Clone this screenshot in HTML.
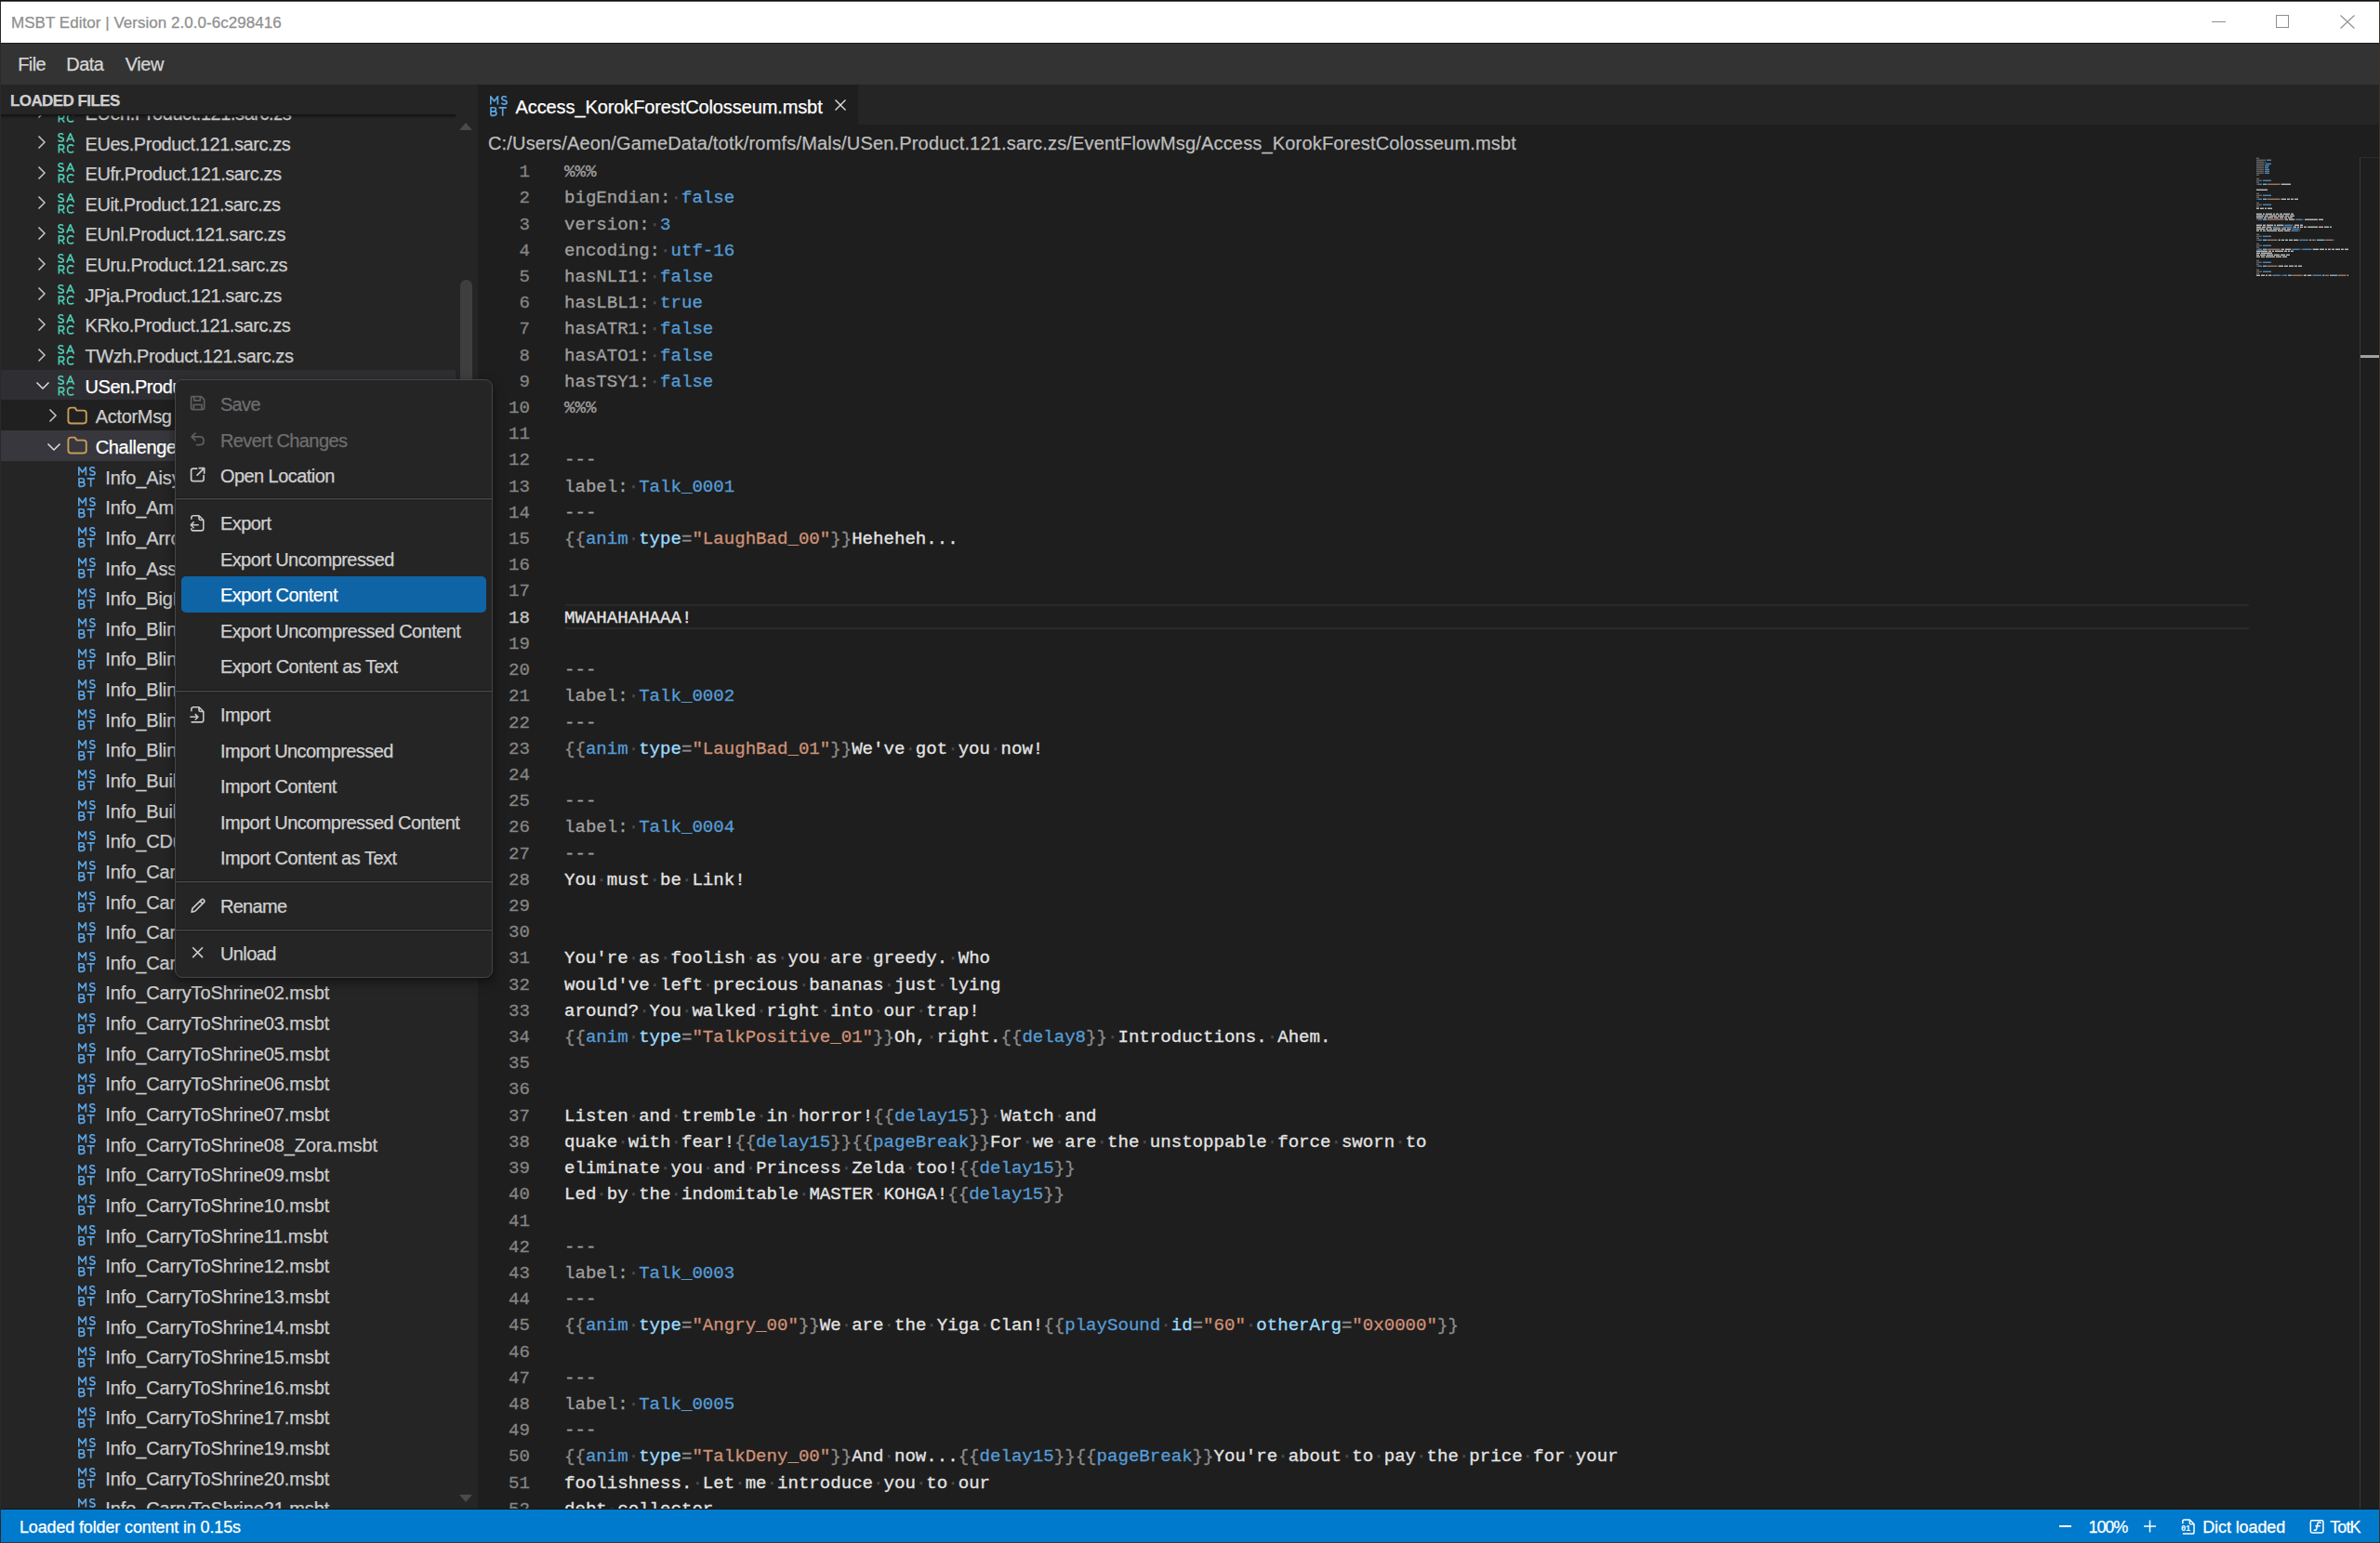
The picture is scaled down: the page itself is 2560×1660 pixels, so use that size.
<!DOCTYPE html>
<html><head><meta charset="utf-8"><title>MSBT Editor</title>
<style>
html,body{margin:0;padding:0;width:2560px;height:1660px;overflow:hidden;background:#1e1e1e;}
body{position:relative;font-family:"Liberation Sans", sans-serif;}
.t{position:absolute;white-space:pre;-webkit-text-stroke:0.25px currentColor;}
.code{position:absolute;white-space:pre;-webkit-text-stroke:0.3px currentColor;font-family:"Liberation Mono", monospace;font-size:19.08px;line-height:28px;}
.ln{position:absolute;white-space:pre;-webkit-text-stroke:0.3px currentColor;font-family:"Liberation Mono", monospace;font-size:19.08px;line-height:28px;color:#858585;text-align:right;width:60px;}
.ws{color:#4a4a4a;}
.k{color:#a0a0a0;} .v{color:#569cd6;} .b{color:#8c8c8c;} .tg{color:#569cd6;} .at{color:#9cdcfe;} .st{color:#ce9178;} .tx{color:#e4e4e4;}
</style></head><body>
<div style="position:absolute;left:0.00px;top:0.00px;width:2560.00px;height:1660.00px;background:#2a2a2a;"></div><div style="position:absolute;left:0.00px;top:0.00px;width:2560.00px;height:1.00px;background:#0e0e0e;"></div><div style="position:absolute;left:2559.00px;top:0.00px;width:1.00px;height:1660.00px;background:#3a342e;"></div><div style="position:absolute;left:0.00px;top:1659.00px;width:2560.00px;height:1.00px;background:#3a342e;"></div><div style="position:absolute;left:1.00px;top:1.00px;width:2558.00px;height:1.00px;background:#5a5a5a;"></div><div style="position:absolute;left:1.00px;top:2.00px;width:2558.00px;height:44.00px;background:#ffffff;"></div><div class="t" style="left:12.00px;top:16.21px;font-size:17.00px;line-height:17.00px;color:#8f8f8f;font-weight:400;letter-spacing:0.035px;">MSBT Editor | Version 2.0.0-6c298416</div><div style="position:absolute;left:2379.00px;top:22.50px;width:15.00px;height:1.00px;background:#8f8f8f;"></div><div style="position:absolute;left:2447.50px;top:16.00px;width:14.00px;height:14.00px;background:transparent;border:1px solid #8f8f8f;box-sizing:border-box;"></div><svg style="position:absolute;left:2517.00px;top:16.00px;" width="16" height="15" viewBox="0 0 16 15"><path d="M0.5 0.5 L15.5 14.5 M15.5 0.5 L0.5 14.5" stroke="#8f8f8f" stroke-width="1.1" fill="none"/></svg><div style="position:absolute;left:1.00px;top:46.00px;width:2558.00px;height:1.00px;background:#1c1c1c;"></div><div style="position:absolute;left:1.00px;top:47.00px;width:2558.00px;height:44.00px;background:#333333;"></div><div class="t" style="left:19.20px;top:59.27px;font-size:20.00px;line-height:20.00px;color:#d6d6d6;font-weight:400;letter-spacing:-0.557px;">File</div><div class="t" style="left:71.30px;top:59.27px;font-size:20.00px;line-height:20.00px;color:#d6d6d6;font-weight:400;letter-spacing:-0.562px;">Data</div><div class="t" style="left:134.80px;top:59.27px;font-size:20.00px;line-height:20.00px;color:#d6d6d6;font-weight:400;letter-spacing:-0.437px;">View</div><div style="position:absolute;left:514.00px;top:91.00px;width:2045.00px;height:1532.00px;background:#1e1e1e;"></div><div style="position:absolute;left:514.00px;top:91.00px;width:2045.00px;height:43.00px;background:#252526;"></div><div style="position:absolute;left:514.00px;top:91.00px;width:409.00px;height:43.00px;background:#1e1e1e;"></div><svg style="position:absolute;left:527.00px;top:103.00px;" width="20" height="23" viewBox="0 0 20 23"><path d="M0.8 9.4 V0.8 L4.6 5.9 L8.4 0.8 V9.4 M17.8 1.9 Q16.9 0.7 15.3 0.7 Q12.8 0.7 12.8 2.8 Q12.8 4.4 15.3 4.9 Q18.1 5.4 18.1 7.2 Q18.1 9.1 15.3 9.1 Q13.2 9.1 12.5 7.7 M1 21.3 V12.7 H4 Q6.4 12.7 6.4 14.8 Q6.4 16.9 4 16.9 H1 M4 16.9 Q7 16.9 7 19.1 Q7 21.3 4 21.3 H1 M9.6 12.9 H17.8 M13.7 12.9 V21.8" stroke="#5aa5e6" stroke-width="1.65" fill="none" stroke-linejoin="round"/></svg><div class="t" style="left:554.60px;top:104.87px;font-size:20.00px;line-height:20.00px;color:#ffffff;font-weight:400;letter-spacing:-0.108px;">Access_KorokForestColosseum.msbt</div><svg style="position:absolute;left:898.00px;top:107.00px;" width="12" height="12" viewBox="0 0 12 12"><path d="M0.5 0.5 L11.5 11.5 M11.5 0.5 L0.5 11.5" stroke="#e6e6e6" stroke-width="1.3" fill="none"/></svg><div class="t" style="left:525.00px;top:144.47px;font-size:20.00px;line-height:20.00px;color:#bdbdbd;font-weight:400;letter-spacing:0.174px;">C:/Users/Aeon/GameData/totk/romfs/Mals/USen.Product.121.sarc.zs/EventFlowMsg/Access_KorokForestColosseum.msbt</div><div style="position:absolute;left:608px;top:650px;width:1811px;height:27px;border-top:2px solid #2a2a2a;border-bottom:2px solid #2a2a2a;box-sizing:border-box;"></div><div class="ln" style="left:510px;top:171.12px;color:#858585">1</div><div class="code" style="left:607px;top:171.12px"><span class="k">%%%</span></div><div class="ln" style="left:510px;top:199.33px;color:#858585">2</div><div class="code" style="left:607px;top:199.33px"><span class="k">bigEndian:</span><span class="ws">·</span><span class="v">false</span></div><div class="ln" style="left:510px;top:227.54px;color:#858585">3</div><div class="code" style="left:607px;top:227.54px"><span class="k">version:</span><span class="ws">·</span><span class="v">3</span></div><div class="ln" style="left:510px;top:255.75px;color:#858585">4</div><div class="code" style="left:607px;top:255.75px"><span class="k">encoding:</span><span class="ws">·</span><span class="v">utf-16</span></div><div class="ln" style="left:510px;top:283.96px;color:#858585">5</div><div class="code" style="left:607px;top:283.96px"><span class="k">hasNLI1:</span><span class="ws">·</span><span class="v">false</span></div><div class="ln" style="left:510px;top:312.17px;color:#858585">6</div><div class="code" style="left:607px;top:312.17px"><span class="k">hasLBL1:</span><span class="ws">·</span><span class="v">true</span></div><div class="ln" style="left:510px;top:340.38px;color:#858585">7</div><div class="code" style="left:607px;top:340.38px"><span class="k">hasATR1:</span><span class="ws">·</span><span class="v">false</span></div><div class="ln" style="left:510px;top:368.59px;color:#858585">8</div><div class="code" style="left:607px;top:368.59px"><span class="k">hasATO1:</span><span class="ws">·</span><span class="v">false</span></div><div class="ln" style="left:510px;top:396.80px;color:#858585">9</div><div class="code" style="left:607px;top:396.80px"><span class="k">hasTSY1:</span><span class="ws">·</span><span class="v">false</span></div><div class="ln" style="left:510px;top:425.01px;color:#858585">10</div><div class="code" style="left:607px;top:425.01px"><span class="k">%%%</span></div><div class="ln" style="left:510px;top:453.22px;color:#858585">11</div><div class="ln" style="left:510px;top:481.43px;color:#858585">12</div><div class="code" style="left:607px;top:481.43px"><span class="k">---</span></div><div class="ln" style="left:510px;top:509.64px;color:#858585">13</div><div class="code" style="left:607px;top:509.64px"><span class="k">label:</span><span class="ws">·</span><span class="v">Talk_0001</span></div><div class="ln" style="left:510px;top:537.85px;color:#858585">14</div><div class="code" style="left:607px;top:537.85px"><span class="k">---</span></div><div class="ln" style="left:510px;top:566.06px;color:#858585">15</div><div class="code" style="left:607px;top:566.06px"><span class="b">{{</span><span class="tg">anim</span><span class="ws">·</span><span class="at">type</span><span class="b">=</span><span class="st">&quot;LaughBad_00&quot;</span><span class="b">}}</span><span class="tx">Heheheh...</span></div><div class="ln" style="left:510px;top:594.27px;color:#858585">16</div><div class="ln" style="left:510px;top:622.48px;color:#858585">17</div><div class="ln" style="left:510px;top:650.69px;color:#c6c6c6">18</div><div class="code" style="left:607px;top:650.69px"><span class="tx">MWAHAHAHAAA!</span></div><div class="ln" style="left:510px;top:678.90px;color:#858585">19</div><div class="ln" style="left:510px;top:707.11px;color:#858585">20</div><div class="code" style="left:607px;top:707.11px"><span class="k">---</span></div><div class="ln" style="left:510px;top:735.32px;color:#858585">21</div><div class="code" style="left:607px;top:735.32px"><span class="k">label:</span><span class="ws">·</span><span class="v">Talk_0002</span></div><div class="ln" style="left:510px;top:763.53px;color:#858585">22</div><div class="code" style="left:607px;top:763.53px"><span class="k">---</span></div><div class="ln" style="left:510px;top:791.74px;color:#858585">23</div><div class="code" style="left:607px;top:791.74px"><span class="b">{{</span><span class="tg">anim</span><span class="ws">·</span><span class="at">type</span><span class="b">=</span><span class="st">&quot;LaughBad_01&quot;</span><span class="b">}}</span><span class="tx">We&#x27;ve</span><span class="ws">·</span><span class="tx">got</span><span class="ws">·</span><span class="tx">you</span><span class="ws">·</span><span class="tx">now!</span></div><div class="ln" style="left:510px;top:819.95px;color:#858585">24</div><div class="ln" style="left:510px;top:848.16px;color:#858585">25</div><div class="code" style="left:607px;top:848.16px"><span class="k">---</span></div><div class="ln" style="left:510px;top:876.37px;color:#858585">26</div><div class="code" style="left:607px;top:876.37px"><span class="k">label:</span><span class="ws">·</span><span class="v">Talk_0004</span></div><div class="ln" style="left:510px;top:904.58px;color:#858585">27</div><div class="code" style="left:607px;top:904.58px"><span class="k">---</span></div><div class="ln" style="left:510px;top:932.79px;color:#858585">28</div><div class="code" style="left:607px;top:932.79px"><span class="tx">You</span><span class="ws">·</span><span class="tx">must</span><span class="ws">·</span><span class="tx">be</span><span class="ws">·</span><span class="tx">Link!</span></div><div class="ln" style="left:510px;top:961.00px;color:#858585">29</div><div class="ln" style="left:510px;top:989.21px;color:#858585">30</div><div class="ln" style="left:510px;top:1017.42px;color:#858585">31</div><div class="code" style="left:607px;top:1017.42px"><span class="tx">You&#x27;re</span><span class="ws">·</span><span class="tx">as</span><span class="ws">·</span><span class="tx">foolish</span><span class="ws">·</span><span class="tx">as</span><span class="ws">·</span><span class="tx">you</span><span class="ws">·</span><span class="tx">are</span><span class="ws">·</span><span class="tx">greedy.</span><span class="ws">·</span><span class="tx">Who</span></div><div class="ln" style="left:510px;top:1045.63px;color:#858585">32</div><div class="code" style="left:607px;top:1045.63px"><span class="tx">would&#x27;ve</span><span class="ws">·</span><span class="tx">left</span><span class="ws">·</span><span class="tx">precious</span><span class="ws">·</span><span class="tx">bananas</span><span class="ws">·</span><span class="tx">just</span><span class="ws">·</span><span class="tx">lying</span></div><div class="ln" style="left:510px;top:1073.84px;color:#858585">33</div><div class="code" style="left:607px;top:1073.84px"><span class="tx">around?</span><span class="ws">·</span><span class="tx">You</span><span class="ws">·</span><span class="tx">walked</span><span class="ws">·</span><span class="tx">right</span><span class="ws">·</span><span class="tx">into</span><span class="ws">·</span><span class="tx">our</span><span class="ws">·</span><span class="tx">trap!</span></div><div class="ln" style="left:510px;top:1102.05px;color:#858585">34</div><div class="code" style="left:607px;top:1102.05px"><span class="b">{{</span><span class="tg">anim</span><span class="ws">·</span><span class="at">type</span><span class="b">=</span><span class="st">&quot;TalkPositive_01&quot;</span><span class="b">}}</span><span class="tx">Oh,</span><span class="ws">·</span><span class="tx">right.</span><span class="b">{{</span><span class="tg">delay8</span><span class="b">}}</span><span class="ws">·</span><span class="tx">Introductions.</span><span class="ws">·</span><span class="tx">Ahem.</span></div><div class="ln" style="left:510px;top:1130.26px;color:#858585">35</div><div class="ln" style="left:510px;top:1158.47px;color:#858585">36</div><div class="ln" style="left:510px;top:1186.68px;color:#858585">37</div><div class="code" style="left:607px;top:1186.68px"><span class="tx">Listen</span><span class="ws">·</span><span class="tx">and</span><span class="ws">·</span><span class="tx">tremble</span><span class="ws">·</span><span class="tx">in</span><span class="ws">·</span><span class="tx">horror!</span><span class="b">{{</span><span class="tg">delay15</span><span class="b">}}</span><span class="ws">·</span><span class="tx">Watch</span><span class="ws">·</span><span class="tx">and</span></div><div class="ln" style="left:510px;top:1214.89px;color:#858585">38</div><div class="code" style="left:607px;top:1214.89px"><span class="tx">quake</span><span class="ws">·</span><span class="tx">with</span><span class="ws">·</span><span class="tx">fear!</span><span class="b">{{</span><span class="tg">delay15</span><span class="b">}}</span><span class="b">{{</span><span class="tg">pageBreak</span><span class="b">}}</span><span class="tx">For</span><span class="ws">·</span><span class="tx">we</span><span class="ws">·</span><span class="tx">are</span><span class="ws">·</span><span class="tx">the</span><span class="ws">·</span><span class="tx">unstoppable</span><span class="ws">·</span><span class="tx">force</span><span class="ws">·</span><span class="tx">sworn</span><span class="ws">·</span><span class="tx">to</span></div><div class="ln" style="left:510px;top:1243.10px;color:#858585">39</div><div class="code" style="left:607px;top:1243.10px"><span class="tx">eliminate</span><span class="ws">·</span><span class="tx">you</span><span class="ws">·</span><span class="tx">and</span><span class="ws">·</span><span class="tx">Princess</span><span class="ws">·</span><span class="tx">Zelda</span><span class="ws">·</span><span class="tx">too!</span><span class="b">{{</span><span class="tg">delay15</span><span class="b">}}</span></div><div class="ln" style="left:510px;top:1271.31px;color:#858585">40</div><div class="code" style="left:607px;top:1271.31px"><span class="tx">Led</span><span class="ws">·</span><span class="tx">by</span><span class="ws">·</span><span class="tx">the</span><span class="ws">·</span><span class="tx">indomitable</span><span class="ws">·</span><span class="tx">MASTER</span><span class="ws">·</span><span class="tx">KOHGA!</span><span class="b">{{</span><span class="tg">delay15</span><span class="b">}}</span></div><div class="ln" style="left:510px;top:1299.52px;color:#858585">41</div><div class="ln" style="left:510px;top:1327.73px;color:#858585">42</div><div class="code" style="left:607px;top:1327.73px"><span class="k">---</span></div><div class="ln" style="left:510px;top:1355.94px;color:#858585">43</div><div class="code" style="left:607px;top:1355.94px"><span class="k">label:</span><span class="ws">·</span><span class="v">Talk_0003</span></div><div class="ln" style="left:510px;top:1384.15px;color:#858585">44</div><div class="code" style="left:607px;top:1384.15px"><span class="k">---</span></div><div class="ln" style="left:510px;top:1412.36px;color:#858585">45</div><div class="code" style="left:607px;top:1412.36px"><span class="b">{{</span><span class="tg">anim</span><span class="ws">·</span><span class="at">type</span><span class="b">=</span><span class="st">&quot;Angry_00&quot;</span><span class="b">}}</span><span class="tx">We</span><span class="ws">·</span><span class="tx">are</span><span class="ws">·</span><span class="tx">the</span><span class="ws">·</span><span class="tx">Yiga</span><span class="ws">·</span><span class="tx">Clan!</span><span class="b">{{</span><span class="tg">playSound</span><span class="ws">·</span><span class="at">id</span><span class="b">=</span><span class="st">&quot;60&quot;</span><span class="ws">·</span><span class="at">otherArg</span><span class="b">=</span><span class="st">&quot;0x0000&quot;</span><span class="b">}}</span></div><div class="ln" style="left:510px;top:1440.57px;color:#858585">46</div><div class="ln" style="left:510px;top:1468.78px;color:#858585">47</div><div class="code" style="left:607px;top:1468.78px"><span class="k">---</span></div><div class="ln" style="left:510px;top:1496.99px;color:#858585">48</div><div class="code" style="left:607px;top:1496.99px"><span class="k">label:</span><span class="ws">·</span><span class="v">Talk_0005</span></div><div class="ln" style="left:510px;top:1525.20px;color:#858585">49</div><div class="code" style="left:607px;top:1525.20px"><span class="k">---</span></div><div class="ln" style="left:510px;top:1553.41px;color:#858585">50</div><div class="code" style="left:607px;top:1553.41px"><span class="b">{{</span><span class="tg">anim</span><span class="ws">·</span><span class="at">type</span><span class="b">=</span><span class="st">&quot;TalkDeny_00&quot;</span><span class="b">}}</span><span class="tx">And</span><span class="ws">·</span><span class="tx">now...</span><span class="b">{{</span><span class="tg">delay15</span><span class="b">}}</span><span class="b">{{</span><span class="tg">pageBreak</span><span class="b">}}</span><span class="tx">You&#x27;re</span><span class="ws">·</span><span class="tx">about</span><span class="ws">·</span><span class="tx">to</span><span class="ws">·</span><span class="tx">pay</span><span class="ws">·</span><span class="tx">the</span><span class="ws">·</span><span class="tx">price</span><span class="ws">·</span><span class="tx">for</span><span class="ws">·</span><span class="tx">your</span></div><div class="ln" style="left:510px;top:1581.62px;color:#858585">51</div><div class="code" style="left:607px;top:1581.62px"><span class="tx">foolishness.</span><span class="ws">·</span><span class="tx">Let</span><span class="ws">·</span><span class="tx">me</span><span class="ws">·</span><span class="tx">introduce</span><span class="ws">·</span><span class="tx">you</span><span class="ws">·</span><span class="tx">to</span><span class="ws">·</span><span class="tx">our</span></div><div class="ln" style="left:510px;top:1609.83px;color:#858585">52</div><div class="code" style="left:607px;top:1609.83px"><span class="tx">debt</span><span class="ws">·</span><span class="tx">collector...</span></div><div style="position:absolute;left:2427px;top:170px;width:3px;height:1px;background:rgba(160,160,160,0.50);box-shadow:0 -1px 0 rgba(160,160,160,0.23)"></div><div style="position:absolute;left:2427px;top:172px;width:10px;height:1px;background:rgba(160,160,160,0.50);box-shadow:0 -1px 0 rgba(160,160,160,0.23)"></div><div style="position:absolute;left:2438px;top:172px;width:5px;height:1px;background:rgba(86,156,214,0.80);box-shadow:0 -1px 0 rgba(86,156,214,0.36)"></div><div style="position:absolute;left:2427px;top:174px;width:8px;height:1px;background:rgba(160,160,160,0.50);box-shadow:0 -1px 0 rgba(160,160,160,0.23)"></div><div style="position:absolute;left:2436px;top:174px;width:1px;height:1px;background:rgba(86,156,214,0.80);box-shadow:0 -1px 0 rgba(86,156,214,0.36)"></div><div style="position:absolute;left:2427px;top:176px;width:9px;height:1px;background:rgba(160,160,160,0.50);box-shadow:0 -1px 0 rgba(160,160,160,0.23)"></div><div style="position:absolute;left:2437px;top:176px;width:6px;height:1px;background:rgba(86,156,214,0.80);box-shadow:0 -1px 0 rgba(86,156,214,0.36)"></div><div style="position:absolute;left:2427px;top:178px;width:8px;height:1px;background:rgba(160,160,160,0.50);box-shadow:0 -1px 0 rgba(160,160,160,0.23)"></div><div style="position:absolute;left:2436px;top:178px;width:5px;height:1px;background:rgba(86,156,214,0.80);box-shadow:0 -1px 0 rgba(86,156,214,0.36)"></div><div style="position:absolute;left:2427px;top:180px;width:8px;height:1px;background:rgba(160,160,160,0.50);box-shadow:0 -1px 0 rgba(160,160,160,0.23)"></div><div style="position:absolute;left:2436px;top:180px;width:4px;height:1px;background:rgba(86,156,214,0.80);box-shadow:0 -1px 0 rgba(86,156,214,0.36)"></div><div style="position:absolute;left:2427px;top:182px;width:8px;height:1px;background:rgba(160,160,160,0.50);box-shadow:0 -1px 0 rgba(160,160,160,0.23)"></div><div style="position:absolute;left:2436px;top:182px;width:5px;height:1px;background:rgba(86,156,214,0.80);box-shadow:0 -1px 0 rgba(86,156,214,0.36)"></div><div style="position:absolute;left:2427px;top:184px;width:8px;height:1px;background:rgba(160,160,160,0.50);box-shadow:0 -1px 0 rgba(160,160,160,0.23)"></div><div style="position:absolute;left:2436px;top:184px;width:5px;height:1px;background:rgba(86,156,214,0.80);box-shadow:0 -1px 0 rgba(86,156,214,0.36)"></div><div style="position:absolute;left:2427px;top:186px;width:8px;height:1px;background:rgba(160,160,160,0.50);box-shadow:0 -1px 0 rgba(160,160,160,0.23)"></div><div style="position:absolute;left:2436px;top:186px;width:5px;height:1px;background:rgba(86,156,214,0.80);box-shadow:0 -1px 0 rgba(86,156,214,0.36)"></div><div style="position:absolute;left:2427px;top:188px;width:3px;height:1px;background:rgba(160,160,160,0.50);box-shadow:0 -1px 0 rgba(160,160,160,0.23)"></div><div style="position:absolute;left:2427px;top:192px;width:3px;height:1px;background:rgba(160,160,160,0.50);box-shadow:0 -1px 0 rgba(160,160,160,0.23)"></div><div style="position:absolute;left:2427px;top:194px;width:6px;height:1px;background:rgba(160,160,160,0.50);box-shadow:0 -1px 0 rgba(160,160,160,0.23)"></div><div style="position:absolute;left:2434px;top:194px;width:9px;height:1px;background:rgba(86,156,214,0.80);box-shadow:0 -1px 0 rgba(86,156,214,0.36)"></div><div style="position:absolute;left:2427px;top:196px;width:3px;height:1px;background:rgba(160,160,160,0.50);box-shadow:0 -1px 0 rgba(160,160,160,0.23)"></div><div style="position:absolute;left:2427px;top:198px;width:2px;height:1px;background:rgba(140,140,140,0.45);box-shadow:0 -1px 0 rgba(140,140,140,0.20)"></div><div style="position:absolute;left:2429px;top:198px;width:4px;height:1px;background:rgba(86,156,214,0.80);box-shadow:0 -1px 0 rgba(86,156,214,0.36)"></div><div style="position:absolute;left:2434px;top:198px;width:4px;height:1px;background:rgba(156,220,254,0.75);box-shadow:0 -1px 0 rgba(156,220,254,0.34)"></div><div style="position:absolute;left:2438px;top:198px;width:1px;height:1px;background:rgba(140,140,140,0.45);box-shadow:0 -1px 0 rgba(140,140,140,0.20)"></div><div style="position:absolute;left:2439px;top:198px;width:13px;height:1px;background:rgba(206,145,120,0.75);box-shadow:0 -1px 0 rgba(206,145,120,0.34)"></div><div style="position:absolute;left:2452px;top:198px;width:2px;height:1px;background:rgba(140,140,140,0.45);box-shadow:0 -1px 0 rgba(140,140,140,0.20)"></div><div style="position:absolute;left:2454px;top:198px;width:10px;height:1px;background:rgba(212,212,212,0.85);box-shadow:0 -1px 0 rgba(212,212,212,0.38)"></div><div style="position:absolute;left:2427px;top:204px;width:12px;height:1px;background:rgba(212,212,212,0.85);box-shadow:0 -1px 0 rgba(212,212,212,0.38)"></div><div style="position:absolute;left:2427px;top:208px;width:3px;height:1px;background:rgba(160,160,160,0.50);box-shadow:0 -1px 0 rgba(160,160,160,0.23)"></div><div style="position:absolute;left:2427px;top:210px;width:6px;height:1px;background:rgba(160,160,160,0.50);box-shadow:0 -1px 0 rgba(160,160,160,0.23)"></div><div style="position:absolute;left:2434px;top:210px;width:9px;height:1px;background:rgba(86,156,214,0.80);box-shadow:0 -1px 0 rgba(86,156,214,0.36)"></div><div style="position:absolute;left:2427px;top:212px;width:3px;height:1px;background:rgba(160,160,160,0.50);box-shadow:0 -1px 0 rgba(160,160,160,0.23)"></div><div style="position:absolute;left:2427px;top:214px;width:2px;height:1px;background:rgba(140,140,140,0.45);box-shadow:0 -1px 0 rgba(140,140,140,0.20)"></div><div style="position:absolute;left:2429px;top:214px;width:4px;height:1px;background:rgba(86,156,214,0.80);box-shadow:0 -1px 0 rgba(86,156,214,0.36)"></div><div style="position:absolute;left:2434px;top:214px;width:4px;height:1px;background:rgba(156,220,254,0.75);box-shadow:0 -1px 0 rgba(156,220,254,0.34)"></div><div style="position:absolute;left:2438px;top:214px;width:1px;height:1px;background:rgba(140,140,140,0.45);box-shadow:0 -1px 0 rgba(140,140,140,0.20)"></div><div style="position:absolute;left:2439px;top:214px;width:13px;height:1px;background:rgba(206,145,120,0.75);box-shadow:0 -1px 0 rgba(206,145,120,0.34)"></div><div style="position:absolute;left:2452px;top:214px;width:2px;height:1px;background:rgba(140,140,140,0.45);box-shadow:0 -1px 0 rgba(140,140,140,0.20)"></div><div style="position:absolute;left:2454px;top:214px;width:5px;height:1px;background:rgba(212,212,212,0.85);box-shadow:0 -1px 0 rgba(212,212,212,0.38)"></div><div style="position:absolute;left:2460px;top:214px;width:3px;height:1px;background:rgba(212,212,212,0.85);box-shadow:0 -1px 0 rgba(212,212,212,0.38)"></div><div style="position:absolute;left:2464px;top:214px;width:3px;height:1px;background:rgba(212,212,212,0.85);box-shadow:0 -1px 0 rgba(212,212,212,0.38)"></div><div style="position:absolute;left:2468px;top:214px;width:4px;height:1px;background:rgba(212,212,212,0.85);box-shadow:0 -1px 0 rgba(212,212,212,0.38)"></div><div style="position:absolute;left:2427px;top:218px;width:3px;height:1px;background:rgba(160,160,160,0.50);box-shadow:0 -1px 0 rgba(160,160,160,0.23)"></div><div style="position:absolute;left:2427px;top:220px;width:6px;height:1px;background:rgba(160,160,160,0.50);box-shadow:0 -1px 0 rgba(160,160,160,0.23)"></div><div style="position:absolute;left:2434px;top:220px;width:9px;height:1px;background:rgba(86,156,214,0.80);box-shadow:0 -1px 0 rgba(86,156,214,0.36)"></div><div style="position:absolute;left:2427px;top:222px;width:3px;height:1px;background:rgba(160,160,160,0.50);box-shadow:0 -1px 0 rgba(160,160,160,0.23)"></div><div style="position:absolute;left:2427px;top:224px;width:3px;height:1px;background:rgba(212,212,212,0.85);box-shadow:0 -1px 0 rgba(212,212,212,0.38)"></div><div style="position:absolute;left:2431px;top:224px;width:4px;height:1px;background:rgba(212,212,212,0.85);box-shadow:0 -1px 0 rgba(212,212,212,0.38)"></div><div style="position:absolute;left:2436px;top:224px;width:2px;height:1px;background:rgba(212,212,212,0.85);box-shadow:0 -1px 0 rgba(212,212,212,0.38)"></div><div style="position:absolute;left:2439px;top:224px;width:5px;height:1px;background:rgba(212,212,212,0.85);box-shadow:0 -1px 0 rgba(212,212,212,0.38)"></div><div style="position:absolute;left:2427px;top:230px;width:6px;height:1px;background:rgba(212,212,212,0.85);box-shadow:0 -1px 0 rgba(212,212,212,0.38)"></div><div style="position:absolute;left:2434px;top:230px;width:2px;height:1px;background:rgba(212,212,212,0.85);box-shadow:0 -1px 0 rgba(212,212,212,0.38)"></div><div style="position:absolute;left:2437px;top:230px;width:7px;height:1px;background:rgba(212,212,212,0.85);box-shadow:0 -1px 0 rgba(212,212,212,0.38)"></div><div style="position:absolute;left:2445px;top:230px;width:2px;height:1px;background:rgba(212,212,212,0.85);box-shadow:0 -1px 0 rgba(212,212,212,0.38)"></div><div style="position:absolute;left:2448px;top:230px;width:3px;height:1px;background:rgba(212,212,212,0.85);box-shadow:0 -1px 0 rgba(212,212,212,0.38)"></div><div style="position:absolute;left:2452px;top:230px;width:3px;height:1px;background:rgba(212,212,212,0.85);box-shadow:0 -1px 0 rgba(212,212,212,0.38)"></div><div style="position:absolute;left:2456px;top:230px;width:7px;height:1px;background:rgba(212,212,212,0.85);box-shadow:0 -1px 0 rgba(212,212,212,0.38)"></div><div style="position:absolute;left:2464px;top:230px;width:3px;height:1px;background:rgba(212,212,212,0.85);box-shadow:0 -1px 0 rgba(212,212,212,0.38)"></div><div style="position:absolute;left:2427px;top:232px;width:8px;height:1px;background:rgba(212,212,212,0.85);box-shadow:0 -1px 0 rgba(212,212,212,0.38)"></div><div style="position:absolute;left:2436px;top:232px;width:4px;height:1px;background:rgba(212,212,212,0.85);box-shadow:0 -1px 0 rgba(212,212,212,0.38)"></div><div style="position:absolute;left:2441px;top:232px;width:8px;height:1px;background:rgba(212,212,212,0.85);box-shadow:0 -1px 0 rgba(212,212,212,0.38)"></div><div style="position:absolute;left:2450px;top:232px;width:7px;height:1px;background:rgba(212,212,212,0.85);box-shadow:0 -1px 0 rgba(212,212,212,0.38)"></div><div style="position:absolute;left:2458px;top:232px;width:4px;height:1px;background:rgba(212,212,212,0.85);box-shadow:0 -1px 0 rgba(212,212,212,0.38)"></div><div style="position:absolute;left:2463px;top:232px;width:5px;height:1px;background:rgba(212,212,212,0.85);box-shadow:0 -1px 0 rgba(212,212,212,0.38)"></div><div style="position:absolute;left:2427px;top:234px;width:7px;height:1px;background:rgba(212,212,212,0.85);box-shadow:0 -1px 0 rgba(212,212,212,0.38)"></div><div style="position:absolute;left:2435px;top:234px;width:3px;height:1px;background:rgba(212,212,212,0.85);box-shadow:0 -1px 0 rgba(212,212,212,0.38)"></div><div style="position:absolute;left:2439px;top:234px;width:6px;height:1px;background:rgba(212,212,212,0.85);box-shadow:0 -1px 0 rgba(212,212,212,0.38)"></div><div style="position:absolute;left:2446px;top:234px;width:5px;height:1px;background:rgba(212,212,212,0.85);box-shadow:0 -1px 0 rgba(212,212,212,0.38)"></div><div style="position:absolute;left:2452px;top:234px;width:4px;height:1px;background:rgba(212,212,212,0.85);box-shadow:0 -1px 0 rgba(212,212,212,0.38)"></div><div style="position:absolute;left:2457px;top:234px;width:3px;height:1px;background:rgba(212,212,212,0.85);box-shadow:0 -1px 0 rgba(212,212,212,0.38)"></div><div style="position:absolute;left:2461px;top:234px;width:5px;height:1px;background:rgba(212,212,212,0.85);box-shadow:0 -1px 0 rgba(212,212,212,0.38)"></div><div style="position:absolute;left:2427px;top:236px;width:2px;height:1px;background:rgba(140,140,140,0.45);box-shadow:0 -1px 0 rgba(140,140,140,0.20)"></div><div style="position:absolute;left:2429px;top:236px;width:4px;height:1px;background:rgba(86,156,214,0.80);box-shadow:0 -1px 0 rgba(86,156,214,0.36)"></div><div style="position:absolute;left:2434px;top:236px;width:4px;height:1px;background:rgba(156,220,254,0.75);box-shadow:0 -1px 0 rgba(156,220,254,0.34)"></div><div style="position:absolute;left:2438px;top:236px;width:1px;height:1px;background:rgba(140,140,140,0.45);box-shadow:0 -1px 0 rgba(140,140,140,0.20)"></div><div style="position:absolute;left:2439px;top:236px;width:17px;height:1px;background:rgba(206,145,120,0.75);box-shadow:0 -1px 0 rgba(206,145,120,0.34)"></div><div style="position:absolute;left:2456px;top:236px;width:2px;height:1px;background:rgba(140,140,140,0.45);box-shadow:0 -1px 0 rgba(140,140,140,0.20)"></div><div style="position:absolute;left:2458px;top:236px;width:3px;height:1px;background:rgba(212,212,212,0.85);box-shadow:0 -1px 0 rgba(212,212,212,0.38)"></div><div style="position:absolute;left:2462px;top:236px;width:6px;height:1px;background:rgba(212,212,212,0.85);box-shadow:0 -1px 0 rgba(212,212,212,0.38)"></div><div style="position:absolute;left:2468px;top:236px;width:2px;height:1px;background:rgba(140,140,140,0.45);box-shadow:0 -1px 0 rgba(140,140,140,0.20)"></div><div style="position:absolute;left:2470px;top:236px;width:6px;height:1px;background:rgba(86,156,214,0.80);box-shadow:0 -1px 0 rgba(86,156,214,0.36)"></div><div style="position:absolute;left:2476px;top:236px;width:2px;height:1px;background:rgba(140,140,140,0.45);box-shadow:0 -1px 0 rgba(140,140,140,0.20)"></div><div style="position:absolute;left:2479px;top:236px;width:14px;height:1px;background:rgba(212,212,212,0.85);box-shadow:0 -1px 0 rgba(212,212,212,0.38)"></div><div style="position:absolute;left:2494px;top:236px;width:5px;height:1px;background:rgba(212,212,212,0.85);box-shadow:0 -1px 0 rgba(212,212,212,0.38)"></div><div style="position:absolute;left:2427px;top:242px;width:6px;height:1px;background:rgba(212,212,212,0.85);box-shadow:0 -1px 0 rgba(212,212,212,0.38)"></div><div style="position:absolute;left:2434px;top:242px;width:3px;height:1px;background:rgba(212,212,212,0.85);box-shadow:0 -1px 0 rgba(212,212,212,0.38)"></div><div style="position:absolute;left:2438px;top:242px;width:7px;height:1px;background:rgba(212,212,212,0.85);box-shadow:0 -1px 0 rgba(212,212,212,0.38)"></div><div style="position:absolute;left:2446px;top:242px;width:2px;height:1px;background:rgba(212,212,212,0.85);box-shadow:0 -1px 0 rgba(212,212,212,0.38)"></div><div style="position:absolute;left:2449px;top:242px;width:7px;height:1px;background:rgba(212,212,212,0.85);box-shadow:0 -1px 0 rgba(212,212,212,0.38)"></div><div style="position:absolute;left:2456px;top:242px;width:2px;height:1px;background:rgba(140,140,140,0.45);box-shadow:0 -1px 0 rgba(140,140,140,0.20)"></div><div style="position:absolute;left:2458px;top:242px;width:7px;height:1px;background:rgba(86,156,214,0.80);box-shadow:0 -1px 0 rgba(86,156,214,0.36)"></div><div style="position:absolute;left:2465px;top:242px;width:2px;height:1px;background:rgba(140,140,140,0.45);box-shadow:0 -1px 0 rgba(140,140,140,0.20)"></div><div style="position:absolute;left:2468px;top:242px;width:5px;height:1px;background:rgba(212,212,212,0.85);box-shadow:0 -1px 0 rgba(212,212,212,0.38)"></div><div style="position:absolute;left:2474px;top:242px;width:3px;height:1px;background:rgba(212,212,212,0.85);box-shadow:0 -1px 0 rgba(212,212,212,0.38)"></div><div style="position:absolute;left:2427px;top:244px;width:5px;height:1px;background:rgba(212,212,212,0.85);box-shadow:0 -1px 0 rgba(212,212,212,0.38)"></div><div style="position:absolute;left:2433px;top:244px;width:4px;height:1px;background:rgba(212,212,212,0.85);box-shadow:0 -1px 0 rgba(212,212,212,0.38)"></div><div style="position:absolute;left:2438px;top:244px;width:5px;height:1px;background:rgba(212,212,212,0.85);box-shadow:0 -1px 0 rgba(212,212,212,0.38)"></div><div style="position:absolute;left:2443px;top:244px;width:2px;height:1px;background:rgba(140,140,140,0.45);box-shadow:0 -1px 0 rgba(140,140,140,0.20)"></div><div style="position:absolute;left:2445px;top:244px;width:7px;height:1px;background:rgba(86,156,214,0.80);box-shadow:0 -1px 0 rgba(86,156,214,0.36)"></div><div style="position:absolute;left:2452px;top:244px;width:2px;height:1px;background:rgba(140,140,140,0.45);box-shadow:0 -1px 0 rgba(140,140,140,0.20)"></div><div style="position:absolute;left:2454px;top:244px;width:2px;height:1px;background:rgba(140,140,140,0.45);box-shadow:0 -1px 0 rgba(140,140,140,0.20)"></div><div style="position:absolute;left:2456px;top:244px;width:9px;height:1px;background:rgba(86,156,214,0.80);box-shadow:0 -1px 0 rgba(86,156,214,0.36)"></div><div style="position:absolute;left:2465px;top:244px;width:2px;height:1px;background:rgba(140,140,140,0.45);box-shadow:0 -1px 0 rgba(140,140,140,0.20)"></div><div style="position:absolute;left:2467px;top:244px;width:3px;height:1px;background:rgba(212,212,212,0.85);box-shadow:0 -1px 0 rgba(212,212,212,0.38)"></div><div style="position:absolute;left:2471px;top:244px;width:2px;height:1px;background:rgba(212,212,212,0.85);box-shadow:0 -1px 0 rgba(212,212,212,0.38)"></div><div style="position:absolute;left:2474px;top:244px;width:3px;height:1px;background:rgba(212,212,212,0.85);box-shadow:0 -1px 0 rgba(212,212,212,0.38)"></div><div style="position:absolute;left:2478px;top:244px;width:3px;height:1px;background:rgba(212,212,212,0.85);box-shadow:0 -1px 0 rgba(212,212,212,0.38)"></div><div style="position:absolute;left:2482px;top:244px;width:11px;height:1px;background:rgba(212,212,212,0.85);box-shadow:0 -1px 0 rgba(212,212,212,0.38)"></div><div style="position:absolute;left:2494px;top:244px;width:5px;height:1px;background:rgba(212,212,212,0.85);box-shadow:0 -1px 0 rgba(212,212,212,0.38)"></div><div style="position:absolute;left:2500px;top:244px;width:5px;height:1px;background:rgba(212,212,212,0.85);box-shadow:0 -1px 0 rgba(212,212,212,0.38)"></div><div style="position:absolute;left:2506px;top:244px;width:2px;height:1px;background:rgba(212,212,212,0.85);box-shadow:0 -1px 0 rgba(212,212,212,0.38)"></div><div style="position:absolute;left:2427px;top:246px;width:9px;height:1px;background:rgba(212,212,212,0.85);box-shadow:0 -1px 0 rgba(212,212,212,0.38)"></div><div style="position:absolute;left:2437px;top:246px;width:3px;height:1px;background:rgba(212,212,212,0.85);box-shadow:0 -1px 0 rgba(212,212,212,0.38)"></div><div style="position:absolute;left:2441px;top:246px;width:3px;height:1px;background:rgba(212,212,212,0.85);box-shadow:0 -1px 0 rgba(212,212,212,0.38)"></div><div style="position:absolute;left:2445px;top:246px;width:8px;height:1px;background:rgba(212,212,212,0.85);box-shadow:0 -1px 0 rgba(212,212,212,0.38)"></div><div style="position:absolute;left:2454px;top:246px;width:5px;height:1px;background:rgba(212,212,212,0.85);box-shadow:0 -1px 0 rgba(212,212,212,0.38)"></div><div style="position:absolute;left:2460px;top:246px;width:4px;height:1px;background:rgba(212,212,212,0.85);box-shadow:0 -1px 0 rgba(212,212,212,0.38)"></div><div style="position:absolute;left:2464px;top:246px;width:2px;height:1px;background:rgba(140,140,140,0.45);box-shadow:0 -1px 0 rgba(140,140,140,0.20)"></div><div style="position:absolute;left:2466px;top:246px;width:7px;height:1px;background:rgba(86,156,214,0.80);box-shadow:0 -1px 0 rgba(86,156,214,0.36)"></div><div style="position:absolute;left:2473px;top:246px;width:2px;height:1px;background:rgba(140,140,140,0.45);box-shadow:0 -1px 0 rgba(140,140,140,0.20)"></div><div style="position:absolute;left:2427px;top:248px;width:3px;height:1px;background:rgba(212,212,212,0.85);box-shadow:0 -1px 0 rgba(212,212,212,0.38)"></div><div style="position:absolute;left:2431px;top:248px;width:2px;height:1px;background:rgba(212,212,212,0.85);box-shadow:0 -1px 0 rgba(212,212,212,0.38)"></div><div style="position:absolute;left:2434px;top:248px;width:3px;height:1px;background:rgba(212,212,212,0.85);box-shadow:0 -1px 0 rgba(212,212,212,0.38)"></div><div style="position:absolute;left:2438px;top:248px;width:11px;height:1px;background:rgba(212,212,212,0.85);box-shadow:0 -1px 0 rgba(212,212,212,0.38)"></div><div style="position:absolute;left:2450px;top:248px;width:6px;height:1px;background:rgba(212,212,212,0.85);box-shadow:0 -1px 0 rgba(212,212,212,0.38)"></div><div style="position:absolute;left:2457px;top:248px;width:6px;height:1px;background:rgba(212,212,212,0.85);box-shadow:0 -1px 0 rgba(212,212,212,0.38)"></div><div style="position:absolute;left:2463px;top:248px;width:2px;height:1px;background:rgba(140,140,140,0.45);box-shadow:0 -1px 0 rgba(140,140,140,0.20)"></div><div style="position:absolute;left:2465px;top:248px;width:7px;height:1px;background:rgba(86,156,214,0.80);box-shadow:0 -1px 0 rgba(86,156,214,0.36)"></div><div style="position:absolute;left:2472px;top:248px;width:2px;height:1px;background:rgba(140,140,140,0.45);box-shadow:0 -1px 0 rgba(140,140,140,0.20)"></div><div style="position:absolute;left:2427px;top:252px;width:3px;height:1px;background:rgba(160,160,160,0.50);box-shadow:0 -1px 0 rgba(160,160,160,0.23)"></div><div style="position:absolute;left:2427px;top:254px;width:6px;height:1px;background:rgba(160,160,160,0.50);box-shadow:0 -1px 0 rgba(160,160,160,0.23)"></div><div style="position:absolute;left:2434px;top:254px;width:9px;height:1px;background:rgba(86,156,214,0.80);box-shadow:0 -1px 0 rgba(86,156,214,0.36)"></div><div style="position:absolute;left:2427px;top:256px;width:3px;height:1px;background:rgba(160,160,160,0.50);box-shadow:0 -1px 0 rgba(160,160,160,0.23)"></div><div style="position:absolute;left:2427px;top:258px;width:2px;height:1px;background:rgba(140,140,140,0.45);box-shadow:0 -1px 0 rgba(140,140,140,0.20)"></div><div style="position:absolute;left:2429px;top:258px;width:4px;height:1px;background:rgba(86,156,214,0.80);box-shadow:0 -1px 0 rgba(86,156,214,0.36)"></div><div style="position:absolute;left:2434px;top:258px;width:4px;height:1px;background:rgba(156,220,254,0.75);box-shadow:0 -1px 0 rgba(156,220,254,0.34)"></div><div style="position:absolute;left:2438px;top:258px;width:1px;height:1px;background:rgba(140,140,140,0.45);box-shadow:0 -1px 0 rgba(140,140,140,0.20)"></div><div style="position:absolute;left:2439px;top:258px;width:10px;height:1px;background:rgba(206,145,120,0.75);box-shadow:0 -1px 0 rgba(206,145,120,0.34)"></div><div style="position:absolute;left:2449px;top:258px;width:2px;height:1px;background:rgba(140,140,140,0.45);box-shadow:0 -1px 0 rgba(140,140,140,0.20)"></div><div style="position:absolute;left:2451px;top:258px;width:2px;height:1px;background:rgba(212,212,212,0.85);box-shadow:0 -1px 0 rgba(212,212,212,0.38)"></div><div style="position:absolute;left:2454px;top:258px;width:3px;height:1px;background:rgba(212,212,212,0.85);box-shadow:0 -1px 0 rgba(212,212,212,0.38)"></div><div style="position:absolute;left:2458px;top:258px;width:3px;height:1px;background:rgba(212,212,212,0.85);box-shadow:0 -1px 0 rgba(212,212,212,0.38)"></div><div style="position:absolute;left:2462px;top:258px;width:4px;height:1px;background:rgba(212,212,212,0.85);box-shadow:0 -1px 0 rgba(212,212,212,0.38)"></div><div style="position:absolute;left:2467px;top:258px;width:5px;height:1px;background:rgba(212,212,212,0.85);box-shadow:0 -1px 0 rgba(212,212,212,0.38)"></div><div style="position:absolute;left:2472px;top:258px;width:2px;height:1px;background:rgba(140,140,140,0.45);box-shadow:0 -1px 0 rgba(140,140,140,0.20)"></div><div style="position:absolute;left:2474px;top:258px;width:9px;height:1px;background:rgba(86,156,214,0.80);box-shadow:0 -1px 0 rgba(86,156,214,0.36)"></div><div style="position:absolute;left:2484px;top:258px;width:2px;height:1px;background:rgba(156,220,254,0.75);box-shadow:0 -1px 0 rgba(156,220,254,0.34)"></div><div style="position:absolute;left:2486px;top:258px;width:1px;height:1px;background:rgba(140,140,140,0.45);box-shadow:0 -1px 0 rgba(140,140,140,0.20)"></div><div style="position:absolute;left:2487px;top:258px;width:4px;height:1px;background:rgba(206,145,120,0.75);box-shadow:0 -1px 0 rgba(206,145,120,0.34)"></div><div style="position:absolute;left:2492px;top:258px;width:8px;height:1px;background:rgba(156,220,254,0.75);box-shadow:0 -1px 0 rgba(156,220,254,0.34)"></div><div style="position:absolute;left:2500px;top:258px;width:1px;height:1px;background:rgba(140,140,140,0.45);box-shadow:0 -1px 0 rgba(140,140,140,0.20)"></div><div style="position:absolute;left:2501px;top:258px;width:8px;height:1px;background:rgba(206,145,120,0.75);box-shadow:0 -1px 0 rgba(206,145,120,0.34)"></div><div style="position:absolute;left:2509px;top:258px;width:2px;height:1px;background:rgba(140,140,140,0.45);box-shadow:0 -1px 0 rgba(140,140,140,0.20)"></div><div style="position:absolute;left:2427px;top:262px;width:3px;height:1px;background:rgba(160,160,160,0.50);box-shadow:0 -1px 0 rgba(160,160,160,0.23)"></div><div style="position:absolute;left:2427px;top:264px;width:6px;height:1px;background:rgba(160,160,160,0.50);box-shadow:0 -1px 0 rgba(160,160,160,0.23)"></div><div style="position:absolute;left:2434px;top:264px;width:9px;height:1px;background:rgba(86,156,214,0.80);box-shadow:0 -1px 0 rgba(86,156,214,0.36)"></div><div style="position:absolute;left:2427px;top:266px;width:3px;height:1px;background:rgba(160,160,160,0.50);box-shadow:0 -1px 0 rgba(160,160,160,0.23)"></div><div style="position:absolute;left:2427px;top:268px;width:2px;height:1px;background:rgba(140,140,140,0.45);box-shadow:0 -1px 0 rgba(140,140,140,0.20)"></div><div style="position:absolute;left:2429px;top:268px;width:4px;height:1px;background:rgba(86,156,214,0.80);box-shadow:0 -1px 0 rgba(86,156,214,0.36)"></div><div style="position:absolute;left:2434px;top:268px;width:4px;height:1px;background:rgba(156,220,254,0.75);box-shadow:0 -1px 0 rgba(156,220,254,0.34)"></div><div style="position:absolute;left:2438px;top:268px;width:1px;height:1px;background:rgba(140,140,140,0.45);box-shadow:0 -1px 0 rgba(140,140,140,0.20)"></div><div style="position:absolute;left:2439px;top:268px;width:13px;height:1px;background:rgba(206,145,120,0.75);box-shadow:0 -1px 0 rgba(206,145,120,0.34)"></div><div style="position:absolute;left:2452px;top:268px;width:2px;height:1px;background:rgba(140,140,140,0.45);box-shadow:0 -1px 0 rgba(140,140,140,0.20)"></div><div style="position:absolute;left:2454px;top:268px;width:3px;height:1px;background:rgba(212,212,212,0.85);box-shadow:0 -1px 0 rgba(212,212,212,0.38)"></div><div style="position:absolute;left:2458px;top:268px;width:6px;height:1px;background:rgba(212,212,212,0.85);box-shadow:0 -1px 0 rgba(212,212,212,0.38)"></div><div style="position:absolute;left:2464px;top:268px;width:2px;height:1px;background:rgba(140,140,140,0.45);box-shadow:0 -1px 0 rgba(140,140,140,0.20)"></div><div style="position:absolute;left:2466px;top:268px;width:7px;height:1px;background:rgba(86,156,214,0.80);box-shadow:0 -1px 0 rgba(86,156,214,0.36)"></div><div style="position:absolute;left:2473px;top:268px;width:2px;height:1px;background:rgba(140,140,140,0.45);box-shadow:0 -1px 0 rgba(140,140,140,0.20)"></div><div style="position:absolute;left:2475px;top:268px;width:2px;height:1px;background:rgba(140,140,140,0.45);box-shadow:0 -1px 0 rgba(140,140,140,0.20)"></div><div style="position:absolute;left:2477px;top:268px;width:9px;height:1px;background:rgba(86,156,214,0.80);box-shadow:0 -1px 0 rgba(86,156,214,0.36)"></div><div style="position:absolute;left:2486px;top:268px;width:2px;height:1px;background:rgba(140,140,140,0.45);box-shadow:0 -1px 0 rgba(140,140,140,0.20)"></div><div style="position:absolute;left:2488px;top:268px;width:6px;height:1px;background:rgba(212,212,212,0.85);box-shadow:0 -1px 0 rgba(212,212,212,0.38)"></div><div style="position:absolute;left:2495px;top:268px;width:5px;height:1px;background:rgba(212,212,212,0.85);box-shadow:0 -1px 0 rgba(212,212,212,0.38)"></div><div style="position:absolute;left:2501px;top:268px;width:2px;height:1px;background:rgba(212,212,212,0.85);box-shadow:0 -1px 0 rgba(212,212,212,0.38)"></div><div style="position:absolute;left:2504px;top:268px;width:3px;height:1px;background:rgba(212,212,212,0.85);box-shadow:0 -1px 0 rgba(212,212,212,0.38)"></div><div style="position:absolute;left:2508px;top:268px;width:3px;height:1px;background:rgba(212,212,212,0.85);box-shadow:0 -1px 0 rgba(212,212,212,0.38)"></div><div style="position:absolute;left:2512px;top:268px;width:5px;height:1px;background:rgba(212,212,212,0.85);box-shadow:0 -1px 0 rgba(212,212,212,0.38)"></div><div style="position:absolute;left:2518px;top:268px;width:3px;height:1px;background:rgba(212,212,212,0.85);box-shadow:0 -1px 0 rgba(212,212,212,0.38)"></div><div style="position:absolute;left:2522px;top:268px;width:4px;height:1px;background:rgba(212,212,212,0.85);box-shadow:0 -1px 0 rgba(212,212,212,0.38)"></div><div style="position:absolute;left:2427px;top:270px;width:12px;height:1px;background:rgba(212,212,212,0.85);box-shadow:0 -1px 0 rgba(212,212,212,0.38)"></div><div style="position:absolute;left:2440px;top:270px;width:3px;height:1px;background:rgba(212,212,212,0.85);box-shadow:0 -1px 0 rgba(212,212,212,0.38)"></div><div style="position:absolute;left:2444px;top:270px;width:2px;height:1px;background:rgba(212,212,212,0.85);box-shadow:0 -1px 0 rgba(212,212,212,0.38)"></div><div style="position:absolute;left:2447px;top:270px;width:9px;height:1px;background:rgba(212,212,212,0.85);box-shadow:0 -1px 0 rgba(212,212,212,0.38)"></div><div style="position:absolute;left:2457px;top:270px;width:3px;height:1px;background:rgba(212,212,212,0.85);box-shadow:0 -1px 0 rgba(212,212,212,0.38)"></div><div style="position:absolute;left:2461px;top:270px;width:2px;height:1px;background:rgba(212,212,212,0.85);box-shadow:0 -1px 0 rgba(212,212,212,0.38)"></div><div style="position:absolute;left:2464px;top:270px;width:3px;height:1px;background:rgba(212,212,212,0.85);box-shadow:0 -1px 0 rgba(212,212,212,0.38)"></div><div style="position:absolute;left:2427px;top:272px;width:4px;height:1px;background:rgba(212,212,212,0.85);box-shadow:0 -1px 0 rgba(212,212,212,0.38)"></div><div style="position:absolute;left:2432px;top:272px;width:12px;height:1px;background:rgba(212,212,212,0.85);box-shadow:0 -1px 0 rgba(212,212,212,0.38)"></div><div style="position:absolute;left:2427px;top:274px;width:3px;height:1px;background:rgba(212,212,212,0.85);box-shadow:0 -1px 0 rgba(212,212,212,0.38)"></div><div style="position:absolute;left:2431px;top:274px;width:6px;height:1px;background:rgba(212,212,212,0.85);box-shadow:0 -1px 0 rgba(212,212,212,0.38)"></div><div style="position:absolute;left:2438px;top:274px;width:7px;height:1px;background:rgba(212,212,212,0.85);box-shadow:0 -1px 0 rgba(212,212,212,0.38)"></div><div style="position:absolute;left:2446px;top:274px;width:6px;height:1px;background:rgba(212,212,212,0.85);box-shadow:0 -1px 0 rgba(212,212,212,0.38)"></div><div style="position:absolute;left:2453px;top:274px;width:5px;height:1px;background:rgba(212,212,212,0.85);box-shadow:0 -1px 0 rgba(212,212,212,0.38)"></div><div style="position:absolute;left:2459px;top:274px;width:4px;height:1px;background:rgba(212,212,212,0.85);box-shadow:0 -1px 0 rgba(212,212,212,0.38)"></div><div style="position:absolute;left:2427px;top:276px;width:4px;height:1px;background:rgba(212,212,212,0.85);box-shadow:0 -1px 0 rgba(212,212,212,0.38)"></div><div style="position:absolute;left:2432px;top:276px;width:4px;height:1px;background:rgba(212,212,212,0.85);box-shadow:0 -1px 0 rgba(212,212,212,0.38)"></div><div style="position:absolute;left:2437px;top:276px;width:10px;height:1px;background:rgba(212,212,212,0.85);box-shadow:0 -1px 0 rgba(212,212,212,0.38)"></div><div style="position:absolute;left:2448px;top:276px;width:6px;height:1px;background:rgba(212,212,212,0.85);box-shadow:0 -1px 0 rgba(212,212,212,0.38)"></div><div style="position:absolute;left:2455px;top:276px;width:5px;height:1px;background:rgba(212,212,212,0.85);box-shadow:0 -1px 0 rgba(212,212,212,0.38)"></div><div style="position:absolute;left:2427px;top:280px;width:3px;height:1px;background:rgba(160,160,160,0.50);box-shadow:0 -1px 0 rgba(160,160,160,0.23)"></div><div style="position:absolute;left:2427px;top:282px;width:6px;height:1px;background:rgba(160,160,160,0.50);box-shadow:0 -1px 0 rgba(160,160,160,0.23)"></div><div style="position:absolute;left:2434px;top:282px;width:9px;height:1px;background:rgba(86,156,214,0.80);box-shadow:0 -1px 0 rgba(86,156,214,0.36)"></div><div style="position:absolute;left:2427px;top:284px;width:3px;height:1px;background:rgba(160,160,160,0.50);box-shadow:0 -1px 0 rgba(160,160,160,0.23)"></div><div style="position:absolute;left:2427px;top:286px;width:2px;height:1px;background:rgba(140,140,140,0.45);box-shadow:0 -1px 0 rgba(140,140,140,0.20)"></div><div style="position:absolute;left:2429px;top:286px;width:4px;height:1px;background:rgba(86,156,214,0.80);box-shadow:0 -1px 0 rgba(86,156,214,0.36)"></div><div style="position:absolute;left:2434px;top:286px;width:4px;height:1px;background:rgba(156,220,254,0.75);box-shadow:0 -1px 0 rgba(156,220,254,0.34)"></div><div style="position:absolute;left:2438px;top:286px;width:1px;height:1px;background:rgba(140,140,140,0.45);box-shadow:0 -1px 0 rgba(140,140,140,0.20)"></div><div style="position:absolute;left:2439px;top:286px;width:10px;height:1px;background:rgba(206,145,120,0.75);box-shadow:0 -1px 0 rgba(206,145,120,0.34)"></div><div style="position:absolute;left:2449px;top:286px;width:2px;height:1px;background:rgba(140,140,140,0.45);box-shadow:0 -1px 0 rgba(140,140,140,0.20)"></div><div style="position:absolute;left:2451px;top:286px;width:5px;height:1px;background:rgba(212,212,212,0.85);box-shadow:0 -1px 0 rgba(212,212,212,0.38)"></div><div style="position:absolute;left:2457px;top:286px;width:4px;height:1px;background:rgba(212,212,212,0.85);box-shadow:0 -1px 0 rgba(212,212,212,0.38)"></div><div style="position:absolute;left:2462px;top:286px;width:5px;height:1px;background:rgba(212,212,212,0.85);box-shadow:0 -1px 0 rgba(212,212,212,0.38)"></div><div style="position:absolute;left:2468px;top:286px;width:3px;height:1px;background:rgba(212,212,212,0.85);box-shadow:0 -1px 0 rgba(212,212,212,0.38)"></div><div style="position:absolute;left:2472px;top:286px;width:4px;height:1px;background:rgba(212,212,212,0.85);box-shadow:0 -1px 0 rgba(212,212,212,0.38)"></div><div style="position:absolute;left:2427px;top:290px;width:3px;height:1px;background:rgba(160,160,160,0.50);box-shadow:0 -1px 0 rgba(160,160,160,0.23)"></div><div style="position:absolute;left:2427px;top:292px;width:6px;height:1px;background:rgba(160,160,160,0.50);box-shadow:0 -1px 0 rgba(160,160,160,0.23)"></div><div style="position:absolute;left:2434px;top:292px;width:9px;height:1px;background:rgba(86,156,214,0.80);box-shadow:0 -1px 0 rgba(86,156,214,0.36)"></div><div style="position:absolute;left:2427px;top:294px;width:3px;height:1px;background:rgba(160,160,160,0.50);box-shadow:0 -1px 0 rgba(160,160,160,0.23)"></div><div style="position:absolute;left:2427px;top:296px;width:4px;height:1px;background:rgba(212,212,212,0.85);box-shadow:0 -1px 0 rgba(212,212,212,0.38)"></div><div style="position:absolute;left:2432px;top:296px;width:4px;height:1px;background:rgba(212,212,212,0.85);box-shadow:0 -1px 0 rgba(212,212,212,0.38)"></div><div style="position:absolute;left:2437px;top:296px;width:2px;height:1px;background:rgba(212,212,212,0.85);box-shadow:0 -1px 0 rgba(212,212,212,0.38)"></div><div style="position:absolute;left:2440px;top:296px;width:3px;height:1px;background:rgba(212,212,212,0.85);box-shadow:0 -1px 0 rgba(212,212,212,0.38)"></div><div style="position:absolute;left:2443px;top:296px;width:2px;height:1px;background:rgba(140,140,140,0.45);box-shadow:0 -1px 0 rgba(140,140,140,0.20)"></div><div style="position:absolute;left:2445px;top:296px;width:7px;height:1px;background:rgba(86,156,214,0.80);box-shadow:0 -1px 0 rgba(86,156,214,0.36)"></div><div style="position:absolute;left:2452px;top:296px;width:2px;height:1px;background:rgba(140,140,140,0.45);box-shadow:0 -1px 0 rgba(140,140,140,0.20)"></div><div style="position:absolute;left:2454px;top:296px;width:2px;height:1px;background:rgba(140,140,140,0.45);box-shadow:0 -1px 0 rgba(140,140,140,0.20)"></div><div style="position:absolute;left:2456px;top:296px;width:4px;height:1px;background:rgba(86,156,214,0.80);box-shadow:0 -1px 0 rgba(86,156,214,0.36)"></div><div style="position:absolute;left:2461px;top:296px;width:4px;height:1px;background:rgba(156,220,254,0.75);box-shadow:0 -1px 0 rgba(156,220,254,0.34)"></div><div style="position:absolute;left:2465px;top:296px;width:1px;height:1px;background:rgba(140,140,140,0.45);box-shadow:0 -1px 0 rgba(140,140,140,0.20)"></div><div style="position:absolute;left:2466px;top:296px;width:10px;height:1px;background:rgba(206,145,120,0.75);box-shadow:0 -1px 0 rgba(206,145,120,0.34)"></div><div style="position:absolute;left:2476px;top:296px;width:2px;height:1px;background:rgba(140,140,140,0.45);box-shadow:0 -1px 0 rgba(140,140,140,0.20)"></div><div style="position:absolute;left:2478px;top:296px;width:3px;height:1px;background:rgba(212,212,212,0.85);box-shadow:0 -1px 0 rgba(212,212,212,0.38)"></div><div style="position:absolute;left:2482px;top:296px;width:4px;height:1px;background:rgba(212,212,212,0.85);box-shadow:0 -1px 0 rgba(212,212,212,0.38)"></div><div style="position:absolute;left:2486px;top:296px;width:2px;height:1px;background:rgba(140,140,140,0.45);box-shadow:0 -1px 0 rgba(140,140,140,0.20)"></div><div style="position:absolute;left:2488px;top:296px;width:9px;height:1px;background:rgba(86,156,214,0.80);box-shadow:0 -1px 0 rgba(86,156,214,0.36)"></div><div style="position:absolute;left:2498px;top:296px;width:2px;height:1px;background:rgba(156,220,254,0.75);box-shadow:0 -1px 0 rgba(156,220,254,0.34)"></div><div style="position:absolute;left:2500px;top:296px;width:1px;height:1px;background:rgba(140,140,140,0.45);box-shadow:0 -1px 0 rgba(140,140,140,0.20)"></div><div style="position:absolute;left:2501px;top:296px;width:4px;height:1px;background:rgba(206,145,120,0.75);box-shadow:0 -1px 0 rgba(206,145,120,0.34)"></div><div style="position:absolute;left:2506px;top:296px;width:8px;height:1px;background:rgba(156,220,254,0.75);box-shadow:0 -1px 0 rgba(156,220,254,0.34)"></div><div style="position:absolute;left:2514px;top:296px;width:1px;height:1px;background:rgba(140,140,140,0.45);box-shadow:0 -1px 0 rgba(140,140,140,0.20)"></div><div style="position:absolute;left:2515px;top:296px;width:8px;height:1px;background:rgba(206,145,120,0.75);box-shadow:0 -1px 0 rgba(206,145,120,0.34)"></div><div style="position:absolute;left:2523px;top:296px;width:2px;height:1px;background:rgba(140,140,140,0.45);box-shadow:0 -1px 0 rgba(140,140,140,0.20)"></div><div style="position:absolute;left:2525px;top:296px;width:1px;height:1px;background:rgba(212,212,212,0.85);box-shadow:0 -1px 0 rgba(212,212,212,0.38)"></div><div style="position:absolute;left:2538.00px;top:169.00px;width:1.00px;height:1454.00px;background:#3a3a3a;"></div><div style="position:absolute;left:2538.00px;top:169.00px;width:21.00px;height:1.00px;background:#2c2c2c;"></div><div style="position:absolute;left:2539.00px;top:382.00px;width:20.00px;height:3.00px;background:#a0a0a0;"></div><div style="position:absolute;left:1.00px;top:91.00px;width:513.00px;height:1532.00px;background:#252526;"></div><div style="position:absolute;left:514.00px;top:91.00px;width:6.00px;height:1532.00px;background:#1e1e1e;"></div><div style="position:absolute;left:1.00px;top:397.72px;width:489.00px;height:32.64px;background:#2f2f33;"></div><div style="position:absolute;left:1.00px;top:430.36px;width:489.00px;height:32.64px;background:#202020;"></div><div style="position:absolute;left:1.00px;top:463.00px;width:489.00px;height:32.64px;background:#37373d;"></div><svg style="position:absolute;left:40.00px;top:112.46px;" width="10" height="16" viewBox="0 0 10 16"><path d="M1.5 1.5 L8 8 L1.5 14.5" stroke="#c5c5c5" stroke-width="1.5" fill="none"/></svg><svg style="position:absolute;left:62.00px;top:109.96px;" width="20" height="23" viewBox="0 0 20 23"><path d="M6.0 1.9 Q5.1 0.7 3.5 0.7 Q1.0 0.7 1.0 2.8 Q1.0 4.4 3.5 4.9 Q6.3 5.4 6.3 7.2 Q6.3 9.1 3.5 9.1 Q1.4 9.1 0.7 7.7 M9.8 9.6 L13.7 0.7 L17.6 9.6 M11.3 6.6 H16.1 M1.4 21.6 V12.9 H4.4 Q6.8 12.9 6.8 15.3 Q6.8 17.6 4.4 17.6 H1.4 M4.4 17.6 L7.2 21.6 M17.2 14.1 Q16 12.9 14.2 12.9 Q10.6 12.9 10.6 16.9 Q10.6 20.9 14.2 20.9 Q16 20.9 17.2 19.8" stroke="#4ec9b0" stroke-width="1.65" fill="none" stroke-linejoin="round"/></svg><div class="t" style="left:91.50px;top:111.93px;font-size:20.00px;line-height:20.00px;color:#cccccc;font-weight:400;letter-spacing:-0.436px;">EUen.Product.121.sarc.zs</div><svg style="position:absolute;left:40.00px;top:145.10px;" width="10" height="16" viewBox="0 0 10 16"><path d="M1.5 1.5 L8 8 L1.5 14.5" stroke="#c5c5c5" stroke-width="1.5" fill="none"/></svg><svg style="position:absolute;left:62.00px;top:142.60px;" width="20" height="23" viewBox="0 0 20 23"><path d="M6.0 1.9 Q5.1 0.7 3.5 0.7 Q1.0 0.7 1.0 2.8 Q1.0 4.4 3.5 4.9 Q6.3 5.4 6.3 7.2 Q6.3 9.1 3.5 9.1 Q1.4 9.1 0.7 7.7 M9.8 9.6 L13.7 0.7 L17.6 9.6 M11.3 6.6 H16.1 M1.4 21.6 V12.9 H4.4 Q6.8 12.9 6.8 15.3 Q6.8 17.6 4.4 17.6 H1.4 M4.4 17.6 L7.2 21.6 M17.2 14.1 Q16 12.9 14.2 12.9 Q10.6 12.9 10.6 16.9 Q10.6 20.9 14.2 20.9 Q16 20.9 17.2 19.8" stroke="#4ec9b0" stroke-width="1.65" fill="none" stroke-linejoin="round"/></svg><div class="t" style="left:91.50px;top:144.57px;font-size:20.00px;line-height:20.00px;color:#cccccc;font-weight:400;letter-spacing:-0.434px;">EUes.Product.121.sarc.zs</div><svg style="position:absolute;left:40.00px;top:177.74px;" width="10" height="16" viewBox="0 0 10 16"><path d="M1.5 1.5 L8 8 L1.5 14.5" stroke="#c5c5c5" stroke-width="1.5" fill="none"/></svg><svg style="position:absolute;left:62.00px;top:175.24px;" width="20" height="23" viewBox="0 0 20 23"><path d="M6.0 1.9 Q5.1 0.7 3.5 0.7 Q1.0 0.7 1.0 2.8 Q1.0 4.4 3.5 4.9 Q6.3 5.4 6.3 7.2 Q6.3 9.1 3.5 9.1 Q1.4 9.1 0.7 7.7 M9.8 9.6 L13.7 0.7 L17.6 9.6 M11.3 6.6 H16.1 M1.4 21.6 V12.9 H4.4 Q6.8 12.9 6.8 15.3 Q6.8 17.6 4.4 17.6 H1.4 M4.4 17.6 L7.2 21.6 M17.2 14.1 Q16 12.9 14.2 12.9 Q10.6 12.9 10.6 16.9 Q10.6 20.9 14.2 20.9 Q16 20.9 17.2 19.8" stroke="#4ec9b0" stroke-width="1.65" fill="none" stroke-linejoin="round"/></svg><div class="t" style="left:91.50px;top:177.21px;font-size:20.00px;line-height:20.00px;color:#cccccc;font-weight:400;letter-spacing:-0.417px;">EUfr.Product.121.sarc.zs</div><svg style="position:absolute;left:40.00px;top:210.38px;" width="10" height="16" viewBox="0 0 10 16"><path d="M1.5 1.5 L8 8 L1.5 14.5" stroke="#c5c5c5" stroke-width="1.5" fill="none"/></svg><svg style="position:absolute;left:62.00px;top:207.88px;" width="20" height="23" viewBox="0 0 20 23"><path d="M6.0 1.9 Q5.1 0.7 3.5 0.7 Q1.0 0.7 1.0 2.8 Q1.0 4.4 3.5 4.9 Q6.3 5.4 6.3 7.2 Q6.3 9.1 3.5 9.1 Q1.4 9.1 0.7 7.7 M9.8 9.6 L13.7 0.7 L17.6 9.6 M11.3 6.6 H16.1 M1.4 21.6 V12.9 H4.4 Q6.8 12.9 6.8 15.3 Q6.8 17.6 4.4 17.6 H1.4 M4.4 17.6 L7.2 21.6 M17.2 14.1 Q16 12.9 14.2 12.9 Q10.6 12.9 10.6 16.9 Q10.6 20.9 14.2 20.9 Q16 20.9 17.2 19.8" stroke="#4ec9b0" stroke-width="1.65" fill="none" stroke-linejoin="round"/></svg><div class="t" style="left:91.50px;top:209.85px;font-size:20.00px;line-height:20.00px;color:#cccccc;font-weight:400;letter-spacing:-0.413px;">EUit.Product.121.sarc.zs</div><svg style="position:absolute;left:40.00px;top:243.02px;" width="10" height="16" viewBox="0 0 10 16"><path d="M1.5 1.5 L8 8 L1.5 14.5" stroke="#c5c5c5" stroke-width="1.5" fill="none"/></svg><svg style="position:absolute;left:62.00px;top:240.52px;" width="20" height="23" viewBox="0 0 20 23"><path d="M6.0 1.9 Q5.1 0.7 3.5 0.7 Q1.0 0.7 1.0 2.8 Q1.0 4.4 3.5 4.9 Q6.3 5.4 6.3 7.2 Q6.3 9.1 3.5 9.1 Q1.4 9.1 0.7 7.7 M9.8 9.6 L13.7 0.7 L17.6 9.6 M11.3 6.6 H16.1 M1.4 21.6 V12.9 H4.4 Q6.8 12.9 6.8 15.3 Q6.8 17.6 4.4 17.6 H1.4 M4.4 17.6 L7.2 21.6 M17.2 14.1 Q16 12.9 14.2 12.9 Q10.6 12.9 10.6 16.9 Q10.6 20.9 14.2 20.9 Q16 20.9 17.2 19.8" stroke="#4ec9b0" stroke-width="1.65" fill="none" stroke-linejoin="round"/></svg><div class="t" style="left:91.50px;top:242.49px;font-size:20.00px;line-height:20.00px;color:#cccccc;font-weight:400;letter-spacing:-0.423px;">EUnl.Product.121.sarc.zs</div><svg style="position:absolute;left:40.00px;top:275.66px;" width="10" height="16" viewBox="0 0 10 16"><path d="M1.5 1.5 L8 8 L1.5 14.5" stroke="#c5c5c5" stroke-width="1.5" fill="none"/></svg><svg style="position:absolute;left:62.00px;top:273.16px;" width="20" height="23" viewBox="0 0 20 23"><path d="M6.0 1.9 Q5.1 0.7 3.5 0.7 Q1.0 0.7 1.0 2.8 Q1.0 4.4 3.5 4.9 Q6.3 5.4 6.3 7.2 Q6.3 9.1 3.5 9.1 Q1.4 9.1 0.7 7.7 M9.8 9.6 L13.7 0.7 L17.6 9.6 M11.3 6.6 H16.1 M1.4 21.6 V12.9 H4.4 Q6.8 12.9 6.8 15.3 Q6.8 17.6 4.4 17.6 H1.4 M4.4 17.6 L7.2 21.6 M17.2 14.1 Q16 12.9 14.2 12.9 Q10.6 12.9 10.6 16.9 Q10.6 20.9 14.2 20.9 Q16 20.9 17.2 19.8" stroke="#4ec9b0" stroke-width="1.65" fill="none" stroke-linejoin="round"/></svg><div class="t" style="left:91.50px;top:275.13px;font-size:20.00px;line-height:20.00px;color:#cccccc;font-weight:400;letter-spacing:-0.427px;">EUru.Product.121.sarc.zs</div><svg style="position:absolute;left:40.00px;top:308.30px;" width="10" height="16" viewBox="0 0 10 16"><path d="M1.5 1.5 L8 8 L1.5 14.5" stroke="#c5c5c5" stroke-width="1.5" fill="none"/></svg><svg style="position:absolute;left:62.00px;top:305.80px;" width="20" height="23" viewBox="0 0 20 23"><path d="M6.0 1.9 Q5.1 0.7 3.5 0.7 Q1.0 0.7 1.0 2.8 Q1.0 4.4 3.5 4.9 Q6.3 5.4 6.3 7.2 Q6.3 9.1 3.5 9.1 Q1.4 9.1 0.7 7.7 M9.8 9.6 L13.7 0.7 L17.6 9.6 M11.3 6.6 H16.1 M1.4 21.6 V12.9 H4.4 Q6.8 12.9 6.8 15.3 Q6.8 17.6 4.4 17.6 H1.4 M4.4 17.6 L7.2 21.6 M17.2 14.1 Q16 12.9 14.2 12.9 Q10.6 12.9 10.6 16.9 Q10.6 20.9 14.2 20.9 Q16 20.9 17.2 19.8" stroke="#4ec9b0" stroke-width="1.65" fill="none" stroke-linejoin="round"/></svg><div class="t" style="left:91.50px;top:307.77px;font-size:20.00px;line-height:20.00px;color:#cccccc;font-weight:400;letter-spacing:-0.415px;">JPja.Product.121.sarc.zs</div><svg style="position:absolute;left:40.00px;top:340.94px;" width="10" height="16" viewBox="0 0 10 16"><path d="M1.5 1.5 L8 8 L1.5 14.5" stroke="#c5c5c5" stroke-width="1.5" fill="none"/></svg><svg style="position:absolute;left:62.00px;top:338.44px;" width="20" height="23" viewBox="0 0 20 23"><path d="M6.0 1.9 Q5.1 0.7 3.5 0.7 Q1.0 0.7 1.0 2.8 Q1.0 4.4 3.5 4.9 Q6.3 5.4 6.3 7.2 Q6.3 9.1 3.5 9.1 Q1.4 9.1 0.7 7.7 M9.8 9.6 L13.7 0.7 L17.6 9.6 M11.3 6.6 H16.1 M1.4 21.6 V12.9 H4.4 Q6.8 12.9 6.8 15.3 Q6.8 17.6 4.4 17.6 H1.4 M4.4 17.6 L7.2 21.6 M17.2 14.1 Q16 12.9 14.2 12.9 Q10.6 12.9 10.6 16.9 Q10.6 20.9 14.2 20.9 Q16 20.9 17.2 19.8" stroke="#4ec9b0" stroke-width="1.65" fill="none" stroke-linejoin="round"/></svg><div class="t" style="left:91.50px;top:340.41px;font-size:20.00px;line-height:20.00px;color:#cccccc;font-weight:400;letter-spacing:-0.434px;">KRko.Product.121.sarc.zs</div><svg style="position:absolute;left:40.00px;top:373.58px;" width="10" height="16" viewBox="0 0 10 16"><path d="M1.5 1.5 L8 8 L1.5 14.5" stroke="#c5c5c5" stroke-width="1.5" fill="none"/></svg><svg style="position:absolute;left:62.00px;top:371.08px;" width="20" height="23" viewBox="0 0 20 23"><path d="M6.0 1.9 Q5.1 0.7 3.5 0.7 Q1.0 0.7 1.0 2.8 Q1.0 4.4 3.5 4.9 Q6.3 5.4 6.3 7.2 Q6.3 9.1 3.5 9.1 Q1.4 9.1 0.7 7.7 M9.8 9.6 L13.7 0.7 L17.6 9.6 M11.3 6.6 H16.1 M1.4 21.6 V12.9 H4.4 Q6.8 12.9 6.8 15.3 Q6.8 17.6 4.4 17.6 H1.4 M4.4 17.6 L7.2 21.6 M17.2 14.1 Q16 12.9 14.2 12.9 Q10.6 12.9 10.6 16.9 Q10.6 20.9 14.2 20.9 Q16 20.9 17.2 19.8" stroke="#4ec9b0" stroke-width="1.65" fill="none" stroke-linejoin="round"/></svg><div class="t" style="left:91.50px;top:373.05px;font-size:20.00px;line-height:20.00px;color:#cccccc;font-weight:400;letter-spacing:-0.440px;">TWzh.Product.121.sarc.zs</div><svg style="position:absolute;left:38.00px;top:410.22px;" width="16" height="10" viewBox="0 0 16 10"><path d="M1.5 1.5 L8 8 L14.5 1.5" stroke="#e0e0e0" stroke-width="1.5" fill="none"/></svg><svg style="position:absolute;left:62.00px;top:403.72px;" width="20" height="23" viewBox="0 0 20 23"><path d="M6.0 1.9 Q5.1 0.7 3.5 0.7 Q1.0 0.7 1.0 2.8 Q1.0 4.4 3.5 4.9 Q6.3 5.4 6.3 7.2 Q6.3 9.1 3.5 9.1 Q1.4 9.1 0.7 7.7 M9.8 9.6 L13.7 0.7 L17.6 9.6 M11.3 6.6 H16.1 M1.4 21.6 V12.9 H4.4 Q6.8 12.9 6.8 15.3 Q6.8 17.6 4.4 17.6 H1.4 M4.4 17.6 L7.2 21.6 M17.2 14.1 Q16 12.9 14.2 12.9 Q10.6 12.9 10.6 16.9 Q10.6 20.9 14.2 20.9 Q16 20.9 17.2 19.8" stroke="#4ec9b0" stroke-width="1.65" fill="none" stroke-linejoin="round"/></svg><div class="t" style="left:91.50px;top:405.69px;font-size:20.00px;line-height:20.00px;color:#ffffff;font-weight:400;letter-spacing:-0.436px;">USen.Product.121.sarc.zs</div><svg style="position:absolute;left:52.00px;top:438.86px;" width="10" height="16" viewBox="0 0 10 16"><path d="M1.5 1.5 L8 8 L1.5 14.5" stroke="#c5c5c5" stroke-width="1.5" fill="none"/></svg><svg style="position:absolute;left:72.00px;top:436.66px;" width="22" height="20" viewBox="0 0 22 20"><path d="M1.4 15.6 V4.5 Q1.4 1.6 4.3 1.6 H8.6 L10.6 4.6 H17.9 Q20.8 4.6 20.8 7.5 V15.6 Q20.8 18.5 17.9 18.5 H4.3 Q1.4 18.5 1.4 15.6 Z" stroke="#c89b5a" stroke-width="1.9" fill="none" stroke-linejoin="round"/></svg><div class="t" style="left:102.70px;top:438.33px;font-size:20.00px;line-height:20.00px;color:#cccccc;font-weight:400;letter-spacing:-0.317px;">ActorMsg</div><svg style="position:absolute;left:50.00px;top:475.50px;" width="16" height="10" viewBox="0 0 16 10"><path d="M1.5 1.5 L8 8 L14.5 1.5" stroke="#e0e0e0" stroke-width="1.5" fill="none"/></svg><svg style="position:absolute;left:72.00px;top:469.30px;" width="22" height="20" viewBox="0 0 22 20"><path d="M1.4 15.6 V4.5 Q1.4 1.6 4.3 1.6 H8.6 L10.6 4.6 H17.9 Q20.8 4.6 20.8 7.5 V15.6 Q20.8 18.5 17.9 18.5 H4.3 Q1.4 18.5 1.4 15.6 Z" stroke="#c89b5a" stroke-width="1.9" fill="none" stroke-linejoin="round"/></svg><div class="t" style="left:102.70px;top:470.97px;font-size:20.00px;line-height:20.00px;color:#ffffff;font-weight:400;letter-spacing:-0.320px;">ChallengeMsg</div><svg style="position:absolute;left:83.80px;top:502.04px;" width="20" height="23" viewBox="0 0 20 23"><path d="M0.8 9.4 V0.8 L4.6 5.9 L8.4 0.8 V9.4 M17.8 1.9 Q16.9 0.7 15.3 0.7 Q12.8 0.7 12.8 2.8 Q12.8 4.4 15.3 4.9 Q18.1 5.4 18.1 7.2 Q18.1 9.1 15.3 9.1 Q13.2 9.1 12.5 7.7 M1 21.3 V12.7 H4 Q6.4 12.7 6.4 14.8 Q6.4 16.9 4 16.9 H1 M4 16.9 Q7 16.9 7 19.1 Q7 21.3 4 21.3 H1 M9.6 12.9 H17.8 M13.7 12.9 V21.8" stroke="#5aa5e6" stroke-width="1.65" fill="none" stroke-linejoin="round"/></svg><div class="t" style="left:113.20px;top:503.61px;font-size:20.00px;line-height:20.00px;color:#cccccc;font-weight:400;letter-spacing:-0.096px;">Info_AisyaLabHint.msbt</div><svg style="position:absolute;left:83.80px;top:534.68px;" width="20" height="23" viewBox="0 0 20 23"><path d="M0.8 9.4 V0.8 L4.6 5.9 L8.4 0.8 V9.4 M17.8 1.9 Q16.9 0.7 15.3 0.7 Q12.8 0.7 12.8 2.8 Q12.8 4.4 15.3 4.9 Q18.1 5.4 18.1 7.2 Q18.1 9.1 15.3 9.1 Q13.2 9.1 12.5 7.7 M1 21.3 V12.7 H4 Q6.4 12.7 6.4 14.8 Q6.4 16.9 4 16.9 H1 M4 16.9 Q7 16.9 7 19.1 Q7 21.3 4 21.3 H1 M9.6 12.9 H17.8 M13.7 12.9 V21.8" stroke="#5aa5e6" stroke-width="1.65" fill="none" stroke-linejoin="round"/></svg><div class="t" style="left:113.20px;top:536.25px;font-size:20.00px;line-height:20.00px;color:#cccccc;font-weight:400;letter-spacing:-0.097px;">Info_AmiiboShrine.msbt</div><svg style="position:absolute;left:83.80px;top:567.32px;" width="20" height="23" viewBox="0 0 20 23"><path d="M0.8 9.4 V0.8 L4.6 5.9 L8.4 0.8 V9.4 M17.8 1.9 Q16.9 0.7 15.3 0.7 Q12.8 0.7 12.8 2.8 Q12.8 4.4 15.3 4.9 Q18.1 5.4 18.1 7.2 Q18.1 9.1 15.3 9.1 Q13.2 9.1 12.5 7.7 M1 21.3 V12.7 H4 Q6.4 12.7 6.4 14.8 Q6.4 16.9 4 16.9 H1 M4 16.9 Q7 16.9 7 19.1 Q7 21.3 4 21.3 H1 M9.6 12.9 H17.8 M13.7 12.9 V21.8" stroke="#5aa5e6" stroke-width="1.65" fill="none" stroke-linejoin="round"/></svg><div class="t" style="left:113.20px;top:568.89px;font-size:20.00px;line-height:20.00px;color:#cccccc;font-weight:400;letter-spacing:-0.097px;">Info_ArrowShrine.msbt</div><svg style="position:absolute;left:83.80px;top:599.96px;" width="20" height="23" viewBox="0 0 20 23"><path d="M0.8 9.4 V0.8 L4.6 5.9 L8.4 0.8 V9.4 M17.8 1.9 Q16.9 0.7 15.3 0.7 Q12.8 0.7 12.8 2.8 Q12.8 4.4 15.3 4.9 Q18.1 5.4 18.1 7.2 Q18.1 9.1 15.3 9.1 Q13.2 9.1 12.5 7.7 M1 21.3 V12.7 H4 Q6.4 12.7 6.4 14.8 Q6.4 16.9 4 16.9 H1 M4 16.9 Q7 16.9 7 19.1 Q7 21.3 4 21.3 H1 M9.6 12.9 H17.8 M13.7 12.9 V21.8" stroke="#5aa5e6" stroke-width="1.65" fill="none" stroke-linejoin="round"/></svg><div class="t" style="left:113.20px;top:601.53px;font-size:20.00px;line-height:20.00px;color:#cccccc;font-weight:400;letter-spacing:-0.093px;">Info_AssistShrine.msbt</div><svg style="position:absolute;left:83.80px;top:632.60px;" width="20" height="23" viewBox="0 0 20 23"><path d="M0.8 9.4 V0.8 L4.6 5.9 L8.4 0.8 V9.4 M17.8 1.9 Q16.9 0.7 15.3 0.7 Q12.8 0.7 12.8 2.8 Q12.8 4.4 15.3 4.9 Q18.1 5.4 18.1 7.2 Q18.1 9.1 15.3 9.1 Q13.2 9.1 12.5 7.7 M1 21.3 V12.7 H4 Q6.4 12.7 6.4 14.8 Q6.4 16.9 4 16.9 H1 M4 16.9 Q7 16.9 7 19.1 Q7 21.3 4 21.3 H1 M9.6 12.9 H17.8 M13.7 12.9 V21.8" stroke="#5aa5e6" stroke-width="1.65" fill="none" stroke-linejoin="round"/></svg><div class="t" style="left:113.20px;top:634.17px;font-size:20.00px;line-height:20.00px;color:#cccccc;font-weight:400;letter-spacing:-0.092px;">Info_BigBall.msbt</div><svg style="position:absolute;left:83.80px;top:665.24px;" width="20" height="23" viewBox="0 0 20 23"><path d="M0.8 9.4 V0.8 L4.6 5.9 L8.4 0.8 V9.4 M17.8 1.9 Q16.9 0.7 15.3 0.7 Q12.8 0.7 12.8 2.8 Q12.8 4.4 15.3 4.9 Q18.1 5.4 18.1 7.2 Q18.1 9.1 15.3 9.1 Q13.2 9.1 12.5 7.7 M1 21.3 V12.7 H4 Q6.4 12.7 6.4 14.8 Q6.4 16.9 4 16.9 H1 M4 16.9 Q7 16.9 7 19.1 Q7 21.3 4 21.3 H1 M9.6 12.9 H17.8 M13.7 12.9 V21.8" stroke="#5aa5e6" stroke-width="1.65" fill="none" stroke-linejoin="round"/></svg><div class="t" style="left:113.20px;top:666.81px;font-size:20.00px;line-height:20.00px;color:#cccccc;font-weight:400;letter-spacing:-0.095px;">Info_BlindShrine01.msbt</div><svg style="position:absolute;left:83.80px;top:697.88px;" width="20" height="23" viewBox="0 0 20 23"><path d="M0.8 9.4 V0.8 L4.6 5.9 L8.4 0.8 V9.4 M17.8 1.9 Q16.9 0.7 15.3 0.7 Q12.8 0.7 12.8 2.8 Q12.8 4.4 15.3 4.9 Q18.1 5.4 18.1 7.2 Q18.1 9.1 15.3 9.1 Q13.2 9.1 12.5 7.7 M1 21.3 V12.7 H4 Q6.4 12.7 6.4 14.8 Q6.4 16.9 4 16.9 H1 M4 16.9 Q7 16.9 7 19.1 Q7 21.3 4 21.3 H1 M9.6 12.9 H17.8 M13.7 12.9 V21.8" stroke="#5aa5e6" stroke-width="1.65" fill="none" stroke-linejoin="round"/></svg><div class="t" style="left:113.20px;top:699.45px;font-size:20.00px;line-height:20.00px;color:#cccccc;font-weight:400;letter-spacing:-0.095px;">Info_BlindShrine02.msbt</div><svg style="position:absolute;left:83.80px;top:730.52px;" width="20" height="23" viewBox="0 0 20 23"><path d="M0.8 9.4 V0.8 L4.6 5.9 L8.4 0.8 V9.4 M17.8 1.9 Q16.9 0.7 15.3 0.7 Q12.8 0.7 12.8 2.8 Q12.8 4.4 15.3 4.9 Q18.1 5.4 18.1 7.2 Q18.1 9.1 15.3 9.1 Q13.2 9.1 12.5 7.7 M1 21.3 V12.7 H4 Q6.4 12.7 6.4 14.8 Q6.4 16.9 4 16.9 H1 M4 16.9 Q7 16.9 7 19.1 Q7 21.3 4 21.3 H1 M9.6 12.9 H17.8 M13.7 12.9 V21.8" stroke="#5aa5e6" stroke-width="1.65" fill="none" stroke-linejoin="round"/></svg><div class="t" style="left:113.20px;top:732.09px;font-size:20.00px;line-height:20.00px;color:#cccccc;font-weight:400;letter-spacing:-0.095px;">Info_BlindShrine03.msbt</div><svg style="position:absolute;left:83.80px;top:763.16px;" width="20" height="23" viewBox="0 0 20 23"><path d="M0.8 9.4 V0.8 L4.6 5.9 L8.4 0.8 V9.4 M17.8 1.9 Q16.9 0.7 15.3 0.7 Q12.8 0.7 12.8 2.8 Q12.8 4.4 15.3 4.9 Q18.1 5.4 18.1 7.2 Q18.1 9.1 15.3 9.1 Q13.2 9.1 12.5 7.7 M1 21.3 V12.7 H4 Q6.4 12.7 6.4 14.8 Q6.4 16.9 4 16.9 H1 M4 16.9 Q7 16.9 7 19.1 Q7 21.3 4 21.3 H1 M9.6 12.9 H17.8 M13.7 12.9 V21.8" stroke="#5aa5e6" stroke-width="1.65" fill="none" stroke-linejoin="round"/></svg><div class="t" style="left:113.20px;top:764.73px;font-size:20.00px;line-height:20.00px;color:#cccccc;font-weight:400;letter-spacing:-0.095px;">Info_BlindShrine04.msbt</div><svg style="position:absolute;left:83.80px;top:795.80px;" width="20" height="23" viewBox="0 0 20 23"><path d="M0.8 9.4 V0.8 L4.6 5.9 L8.4 0.8 V9.4 M17.8 1.9 Q16.9 0.7 15.3 0.7 Q12.8 0.7 12.8 2.8 Q12.8 4.4 15.3 4.9 Q18.1 5.4 18.1 7.2 Q18.1 9.1 15.3 9.1 Q13.2 9.1 12.5 7.7 M1 21.3 V12.7 H4 Q6.4 12.7 6.4 14.8 Q6.4 16.9 4 16.9 H1 M4 16.9 Q7 16.9 7 19.1 Q7 21.3 4 21.3 H1 M9.6 12.9 H17.8 M13.7 12.9 V21.8" stroke="#5aa5e6" stroke-width="1.65" fill="none" stroke-linejoin="round"/></svg><div class="t" style="left:113.20px;top:797.37px;font-size:20.00px;line-height:20.00px;color:#cccccc;font-weight:400;letter-spacing:-0.095px;">Info_BlindShrine05.msbt</div><svg style="position:absolute;left:83.80px;top:828.44px;" width="20" height="23" viewBox="0 0 20 23"><path d="M0.8 9.4 V0.8 L4.6 5.9 L8.4 0.8 V9.4 M17.8 1.9 Q16.9 0.7 15.3 0.7 Q12.8 0.7 12.8 2.8 Q12.8 4.4 15.3 4.9 Q18.1 5.4 18.1 7.2 Q18.1 9.1 15.3 9.1 Q13.2 9.1 12.5 7.7 M1 21.3 V12.7 H4 Q6.4 12.7 6.4 14.8 Q6.4 16.9 4 16.9 H1 M4 16.9 Q7 16.9 7 19.1 Q7 21.3 4 21.3 H1 M9.6 12.9 H17.8 M13.7 12.9 V21.8" stroke="#5aa5e6" stroke-width="1.65" fill="none" stroke-linejoin="round"/></svg><div class="t" style="left:113.20px;top:830.01px;font-size:20.00px;line-height:20.00px;color:#cccccc;font-weight:400;letter-spacing:-0.095px;">Info_BuildShrine01.msbt</div><svg style="position:absolute;left:83.80px;top:861.08px;" width="20" height="23" viewBox="0 0 20 23"><path d="M0.8 9.4 V0.8 L4.6 5.9 L8.4 0.8 V9.4 M17.8 1.9 Q16.9 0.7 15.3 0.7 Q12.8 0.7 12.8 2.8 Q12.8 4.4 15.3 4.9 Q18.1 5.4 18.1 7.2 Q18.1 9.1 15.3 9.1 Q13.2 9.1 12.5 7.7 M1 21.3 V12.7 H4 Q6.4 12.7 6.4 14.8 Q6.4 16.9 4 16.9 H1 M4 16.9 Q7 16.9 7 19.1 Q7 21.3 4 21.3 H1 M9.6 12.9 H17.8 M13.7 12.9 V21.8" stroke="#5aa5e6" stroke-width="1.65" fill="none" stroke-linejoin="round"/></svg><div class="t" style="left:113.20px;top:862.65px;font-size:20.00px;line-height:20.00px;color:#cccccc;font-weight:400;letter-spacing:-0.095px;">Info_BuildShrine02.msbt</div><svg style="position:absolute;left:83.80px;top:893.72px;" width="20" height="23" viewBox="0 0 20 23"><path d="M0.8 9.4 V0.8 L4.6 5.9 L8.4 0.8 V9.4 M17.8 1.9 Q16.9 0.7 15.3 0.7 Q12.8 0.7 12.8 2.8 Q12.8 4.4 15.3 4.9 Q18.1 5.4 18.1 7.2 Q18.1 9.1 15.3 9.1 Q13.2 9.1 12.5 7.7 M1 21.3 V12.7 H4 Q6.4 12.7 6.4 14.8 Q6.4 16.9 4 16.9 H1 M4 16.9 Q7 16.9 7 19.1 Q7 21.3 4 21.3 H1 M9.6 12.9 H17.8 M13.7 12.9 V21.8" stroke="#5aa5e6" stroke-width="1.65" fill="none" stroke-linejoin="round"/></svg><div class="t" style="left:113.20px;top:895.29px;font-size:20.00px;line-height:20.00px;color:#cccccc;font-weight:400;letter-spacing:-0.105px;">Info_CDungeon.msbt</div><svg style="position:absolute;left:83.80px;top:926.36px;" width="20" height="23" viewBox="0 0 20 23"><path d="M0.8 9.4 V0.8 L4.6 5.9 L8.4 0.8 V9.4 M17.8 1.9 Q16.9 0.7 15.3 0.7 Q12.8 0.7 12.8 2.8 Q12.8 4.4 15.3 4.9 Q18.1 5.4 18.1 7.2 Q18.1 9.1 15.3 9.1 Q13.2 9.1 12.5 7.7 M1 21.3 V12.7 H4 Q6.4 12.7 6.4 14.8 Q6.4 16.9 4 16.9 H1 M4 16.9 Q7 16.9 7 19.1 Q7 21.3 4 21.3 H1 M9.6 12.9 H17.8 M13.7 12.9 V21.8" stroke="#5aa5e6" stroke-width="1.65" fill="none" stroke-linejoin="round"/></svg><div class="t" style="left:113.20px;top:927.93px;font-size:20.00px;line-height:20.00px;color:#cccccc;font-weight:400;letter-spacing:-0.097px;">Info_CarryShrine01.msbt</div><svg style="position:absolute;left:83.80px;top:959.00px;" width="20" height="23" viewBox="0 0 20 23"><path d="M0.8 9.4 V0.8 L4.6 5.9 L8.4 0.8 V9.4 M17.8 1.9 Q16.9 0.7 15.3 0.7 Q12.8 0.7 12.8 2.8 Q12.8 4.4 15.3 4.9 Q18.1 5.4 18.1 7.2 Q18.1 9.1 15.3 9.1 Q13.2 9.1 12.5 7.7 M1 21.3 V12.7 H4 Q6.4 12.7 6.4 14.8 Q6.4 16.9 4 16.9 H1 M4 16.9 Q7 16.9 7 19.1 Q7 21.3 4 21.3 H1 M9.6 12.9 H17.8 M13.7 12.9 V21.8" stroke="#5aa5e6" stroke-width="1.65" fill="none" stroke-linejoin="round"/></svg><div class="t" style="left:113.20px;top:960.57px;font-size:20.00px;line-height:20.00px;color:#cccccc;font-weight:400;letter-spacing:-0.097px;">Info_CarryShrine02.msbt</div><svg style="position:absolute;left:83.80px;top:991.64px;" width="20" height="23" viewBox="0 0 20 23"><path d="M0.8 9.4 V0.8 L4.6 5.9 L8.4 0.8 V9.4 M17.8 1.9 Q16.9 0.7 15.3 0.7 Q12.8 0.7 12.8 2.8 Q12.8 4.4 15.3 4.9 Q18.1 5.4 18.1 7.2 Q18.1 9.1 15.3 9.1 Q13.2 9.1 12.5 7.7 M1 21.3 V12.7 H4 Q6.4 12.7 6.4 14.8 Q6.4 16.9 4 16.9 H1 M4 16.9 Q7 16.9 7 19.1 Q7 21.3 4 21.3 H1 M9.6 12.9 H17.8 M13.7 12.9 V21.8" stroke="#5aa5e6" stroke-width="1.65" fill="none" stroke-linejoin="round"/></svg><div class="t" style="left:113.20px;top:993.21px;font-size:20.00px;line-height:20.00px;color:#cccccc;font-weight:400;letter-spacing:-0.097px;">Info_CarryShrine03.msbt</div><svg style="position:absolute;left:83.80px;top:1024.28px;" width="20" height="23" viewBox="0 0 20 23"><path d="M0.8 9.4 V0.8 L4.6 5.9 L8.4 0.8 V9.4 M17.8 1.9 Q16.9 0.7 15.3 0.7 Q12.8 0.7 12.8 2.8 Q12.8 4.4 15.3 4.9 Q18.1 5.4 18.1 7.2 Q18.1 9.1 15.3 9.1 Q13.2 9.1 12.5 7.7 M1 21.3 V12.7 H4 Q6.4 12.7 6.4 14.8 Q6.4 16.9 4 16.9 H1 M4 16.9 Q7 16.9 7 19.1 Q7 21.3 4 21.3 H1 M9.6 12.9 H17.8 M13.7 12.9 V21.8" stroke="#5aa5e6" stroke-width="1.65" fill="none" stroke-linejoin="round"/></svg><div class="t" style="left:113.20px;top:1025.85px;font-size:20.00px;line-height:20.00px;color:#cccccc;font-weight:400;letter-spacing:-0.098px;">Info_CarryToShrine01.msbt</div><svg style="position:absolute;left:83.80px;top:1056.92px;" width="20" height="23" viewBox="0 0 20 23"><path d="M0.8 9.4 V0.8 L4.6 5.9 L8.4 0.8 V9.4 M17.8 1.9 Q16.9 0.7 15.3 0.7 Q12.8 0.7 12.8 2.8 Q12.8 4.4 15.3 4.9 Q18.1 5.4 18.1 7.2 Q18.1 9.1 15.3 9.1 Q13.2 9.1 12.5 7.7 M1 21.3 V12.7 H4 Q6.4 12.7 6.4 14.8 Q6.4 16.9 4 16.9 H1 M4 16.9 Q7 16.9 7 19.1 Q7 21.3 4 21.3 H1 M9.6 12.9 H17.8 M13.7 12.9 V21.8" stroke="#5aa5e6" stroke-width="1.65" fill="none" stroke-linejoin="round"/></svg><div class="t" style="left:113.20px;top:1058.49px;font-size:20.00px;line-height:20.00px;color:#cccccc;font-weight:400;letter-spacing:-0.098px;">Info_CarryToShrine02.msbt</div><svg style="position:absolute;left:83.80px;top:1089.56px;" width="20" height="23" viewBox="0 0 20 23"><path d="M0.8 9.4 V0.8 L4.6 5.9 L8.4 0.8 V9.4 M17.8 1.9 Q16.9 0.7 15.3 0.7 Q12.8 0.7 12.8 2.8 Q12.8 4.4 15.3 4.9 Q18.1 5.4 18.1 7.2 Q18.1 9.1 15.3 9.1 Q13.2 9.1 12.5 7.7 M1 21.3 V12.7 H4 Q6.4 12.7 6.4 14.8 Q6.4 16.9 4 16.9 H1 M4 16.9 Q7 16.9 7 19.1 Q7 21.3 4 21.3 H1 M9.6 12.9 H17.8 M13.7 12.9 V21.8" stroke="#5aa5e6" stroke-width="1.65" fill="none" stroke-linejoin="round"/></svg><div class="t" style="left:113.20px;top:1091.13px;font-size:20.00px;line-height:20.00px;color:#cccccc;font-weight:400;letter-spacing:-0.098px;">Info_CarryToShrine03.msbt</div><svg style="position:absolute;left:83.80px;top:1122.20px;" width="20" height="23" viewBox="0 0 20 23"><path d="M0.8 9.4 V0.8 L4.6 5.9 L8.4 0.8 V9.4 M17.8 1.9 Q16.9 0.7 15.3 0.7 Q12.8 0.7 12.8 2.8 Q12.8 4.4 15.3 4.9 Q18.1 5.4 18.1 7.2 Q18.1 9.1 15.3 9.1 Q13.2 9.1 12.5 7.7 M1 21.3 V12.7 H4 Q6.4 12.7 6.4 14.8 Q6.4 16.9 4 16.9 H1 M4 16.9 Q7 16.9 7 19.1 Q7 21.3 4 21.3 H1 M9.6 12.9 H17.8 M13.7 12.9 V21.8" stroke="#5aa5e6" stroke-width="1.65" fill="none" stroke-linejoin="round"/></svg><div class="t" style="left:113.20px;top:1123.77px;font-size:20.00px;line-height:20.00px;color:#cccccc;font-weight:400;letter-spacing:-0.098px;">Info_CarryToShrine05.msbt</div><svg style="position:absolute;left:83.80px;top:1154.84px;" width="20" height="23" viewBox="0 0 20 23"><path d="M0.8 9.4 V0.8 L4.6 5.9 L8.4 0.8 V9.4 M17.8 1.9 Q16.9 0.7 15.3 0.7 Q12.8 0.7 12.8 2.8 Q12.8 4.4 15.3 4.9 Q18.1 5.4 18.1 7.2 Q18.1 9.1 15.3 9.1 Q13.2 9.1 12.5 7.7 M1 21.3 V12.7 H4 Q6.4 12.7 6.4 14.8 Q6.4 16.9 4 16.9 H1 M4 16.9 Q7 16.9 7 19.1 Q7 21.3 4 21.3 H1 M9.6 12.9 H17.8 M13.7 12.9 V21.8" stroke="#5aa5e6" stroke-width="1.65" fill="none" stroke-linejoin="round"/></svg><div class="t" style="left:113.20px;top:1156.41px;font-size:20.00px;line-height:20.00px;color:#cccccc;font-weight:400;letter-spacing:-0.098px;">Info_CarryToShrine06.msbt</div><svg style="position:absolute;left:83.80px;top:1187.48px;" width="20" height="23" viewBox="0 0 20 23"><path d="M0.8 9.4 V0.8 L4.6 5.9 L8.4 0.8 V9.4 M17.8 1.9 Q16.9 0.7 15.3 0.7 Q12.8 0.7 12.8 2.8 Q12.8 4.4 15.3 4.9 Q18.1 5.4 18.1 7.2 Q18.1 9.1 15.3 9.1 Q13.2 9.1 12.5 7.7 M1 21.3 V12.7 H4 Q6.4 12.7 6.4 14.8 Q6.4 16.9 4 16.9 H1 M4 16.9 Q7 16.9 7 19.1 Q7 21.3 4 21.3 H1 M9.6 12.9 H17.8 M13.7 12.9 V21.8" stroke="#5aa5e6" stroke-width="1.65" fill="none" stroke-linejoin="round"/></svg><div class="t" style="left:113.20px;top:1189.05px;font-size:20.00px;line-height:20.00px;color:#cccccc;font-weight:400;letter-spacing:-0.098px;">Info_CarryToShrine07.msbt</div><svg style="position:absolute;left:83.80px;top:1220.12px;" width="20" height="23" viewBox="0 0 20 23"><path d="M0.8 9.4 V0.8 L4.6 5.9 L8.4 0.8 V9.4 M17.8 1.9 Q16.9 0.7 15.3 0.7 Q12.8 0.7 12.8 2.8 Q12.8 4.4 15.3 4.9 Q18.1 5.4 18.1 7.2 Q18.1 9.1 15.3 9.1 Q13.2 9.1 12.5 7.7 M1 21.3 V12.7 H4 Q6.4 12.7 6.4 14.8 Q6.4 16.9 4 16.9 H1 M4 16.9 Q7 16.9 7 19.1 Q7 21.3 4 21.3 H1 M9.6 12.9 H17.8 M13.7 12.9 V21.8" stroke="#5aa5e6" stroke-width="1.65" fill="none" stroke-linejoin="round"/></svg><div class="t" style="left:113.20px;top:1221.69px;font-size:20.00px;line-height:20.00px;color:#cccccc;font-weight:400;letter-spacing:-0.099px;">Info_CarryToShrine08_Zora.msbt</div><svg style="position:absolute;left:83.80px;top:1252.76px;" width="20" height="23" viewBox="0 0 20 23"><path d="M0.8 9.4 V0.8 L4.6 5.9 L8.4 0.8 V9.4 M17.8 1.9 Q16.9 0.7 15.3 0.7 Q12.8 0.7 12.8 2.8 Q12.8 4.4 15.3 4.9 Q18.1 5.4 18.1 7.2 Q18.1 9.1 15.3 9.1 Q13.2 9.1 12.5 7.7 M1 21.3 V12.7 H4 Q6.4 12.7 6.4 14.8 Q6.4 16.9 4 16.9 H1 M4 16.9 Q7 16.9 7 19.1 Q7 21.3 4 21.3 H1 M9.6 12.9 H17.8 M13.7 12.9 V21.8" stroke="#5aa5e6" stroke-width="1.65" fill="none" stroke-linejoin="round"/></svg><div class="t" style="left:113.20px;top:1254.33px;font-size:20.00px;line-height:20.00px;color:#cccccc;font-weight:400;letter-spacing:-0.098px;">Info_CarryToShrine09.msbt</div><svg style="position:absolute;left:83.80px;top:1285.40px;" width="20" height="23" viewBox="0 0 20 23"><path d="M0.8 9.4 V0.8 L4.6 5.9 L8.4 0.8 V9.4 M17.8 1.9 Q16.9 0.7 15.3 0.7 Q12.8 0.7 12.8 2.8 Q12.8 4.4 15.3 4.9 Q18.1 5.4 18.1 7.2 Q18.1 9.1 15.3 9.1 Q13.2 9.1 12.5 7.7 M1 21.3 V12.7 H4 Q6.4 12.7 6.4 14.8 Q6.4 16.9 4 16.9 H1 M4 16.9 Q7 16.9 7 19.1 Q7 21.3 4 21.3 H1 M9.6 12.9 H17.8 M13.7 12.9 V21.8" stroke="#5aa5e6" stroke-width="1.65" fill="none" stroke-linejoin="round"/></svg><div class="t" style="left:113.20px;top:1286.97px;font-size:20.00px;line-height:20.00px;color:#cccccc;font-weight:400;letter-spacing:-0.098px;">Info_CarryToShrine10.msbt</div><svg style="position:absolute;left:83.80px;top:1318.04px;" width="20" height="23" viewBox="0 0 20 23"><path d="M0.8 9.4 V0.8 L4.6 5.9 L8.4 0.8 V9.4 M17.8 1.9 Q16.9 0.7 15.3 0.7 Q12.8 0.7 12.8 2.8 Q12.8 4.4 15.3 4.9 Q18.1 5.4 18.1 7.2 Q18.1 9.1 15.3 9.1 Q13.2 9.1 12.5 7.7 M1 21.3 V12.7 H4 Q6.4 12.7 6.4 14.8 Q6.4 16.9 4 16.9 H1 M4 16.9 Q7 16.9 7 19.1 Q7 21.3 4 21.3 H1 M9.6 12.9 H17.8 M13.7 12.9 V21.8" stroke="#5aa5e6" stroke-width="1.65" fill="none" stroke-linejoin="round"/></svg><div class="t" style="left:113.20px;top:1319.61px;font-size:20.00px;line-height:20.00px;color:#cccccc;font-weight:400;letter-spacing:-0.098px;">Info_CarryToShrine11.msbt</div><svg style="position:absolute;left:83.80px;top:1350.68px;" width="20" height="23" viewBox="0 0 20 23"><path d="M0.8 9.4 V0.8 L4.6 5.9 L8.4 0.8 V9.4 M17.8 1.9 Q16.9 0.7 15.3 0.7 Q12.8 0.7 12.8 2.8 Q12.8 4.4 15.3 4.9 Q18.1 5.4 18.1 7.2 Q18.1 9.1 15.3 9.1 Q13.2 9.1 12.5 7.7 M1 21.3 V12.7 H4 Q6.4 12.7 6.4 14.8 Q6.4 16.9 4 16.9 H1 M4 16.9 Q7 16.9 7 19.1 Q7 21.3 4 21.3 H1 M9.6 12.9 H17.8 M13.7 12.9 V21.8" stroke="#5aa5e6" stroke-width="1.65" fill="none" stroke-linejoin="round"/></svg><div class="t" style="left:113.20px;top:1352.25px;font-size:20.00px;line-height:20.00px;color:#cccccc;font-weight:400;letter-spacing:-0.098px;">Info_CarryToShrine12.msbt</div><svg style="position:absolute;left:83.80px;top:1383.32px;" width="20" height="23" viewBox="0 0 20 23"><path d="M0.8 9.4 V0.8 L4.6 5.9 L8.4 0.8 V9.4 M17.8 1.9 Q16.9 0.7 15.3 0.7 Q12.8 0.7 12.8 2.8 Q12.8 4.4 15.3 4.9 Q18.1 5.4 18.1 7.2 Q18.1 9.1 15.3 9.1 Q13.2 9.1 12.5 7.7 M1 21.3 V12.7 H4 Q6.4 12.7 6.4 14.8 Q6.4 16.9 4 16.9 H1 M4 16.9 Q7 16.9 7 19.1 Q7 21.3 4 21.3 H1 M9.6 12.9 H17.8 M13.7 12.9 V21.8" stroke="#5aa5e6" stroke-width="1.65" fill="none" stroke-linejoin="round"/></svg><div class="t" style="left:113.20px;top:1384.89px;font-size:20.00px;line-height:20.00px;color:#cccccc;font-weight:400;letter-spacing:-0.098px;">Info_CarryToShrine13.msbt</div><svg style="position:absolute;left:83.80px;top:1415.96px;" width="20" height="23" viewBox="0 0 20 23"><path d="M0.8 9.4 V0.8 L4.6 5.9 L8.4 0.8 V9.4 M17.8 1.9 Q16.9 0.7 15.3 0.7 Q12.8 0.7 12.8 2.8 Q12.8 4.4 15.3 4.9 Q18.1 5.4 18.1 7.2 Q18.1 9.1 15.3 9.1 Q13.2 9.1 12.5 7.7 M1 21.3 V12.7 H4 Q6.4 12.7 6.4 14.8 Q6.4 16.9 4 16.9 H1 M4 16.9 Q7 16.9 7 19.1 Q7 21.3 4 21.3 H1 M9.6 12.9 H17.8 M13.7 12.9 V21.8" stroke="#5aa5e6" stroke-width="1.65" fill="none" stroke-linejoin="round"/></svg><div class="t" style="left:113.20px;top:1417.53px;font-size:20.00px;line-height:20.00px;color:#cccccc;font-weight:400;letter-spacing:-0.098px;">Info_CarryToShrine14.msbt</div><svg style="position:absolute;left:83.80px;top:1448.60px;" width="20" height="23" viewBox="0 0 20 23"><path d="M0.8 9.4 V0.8 L4.6 5.9 L8.4 0.8 V9.4 M17.8 1.9 Q16.9 0.7 15.3 0.7 Q12.8 0.7 12.8 2.8 Q12.8 4.4 15.3 4.9 Q18.1 5.4 18.1 7.2 Q18.1 9.1 15.3 9.1 Q13.2 9.1 12.5 7.7 M1 21.3 V12.7 H4 Q6.4 12.7 6.4 14.8 Q6.4 16.9 4 16.9 H1 M4 16.9 Q7 16.9 7 19.1 Q7 21.3 4 21.3 H1 M9.6 12.9 H17.8 M13.7 12.9 V21.8" stroke="#5aa5e6" stroke-width="1.65" fill="none" stroke-linejoin="round"/></svg><div class="t" style="left:113.20px;top:1450.17px;font-size:20.00px;line-height:20.00px;color:#cccccc;font-weight:400;letter-spacing:-0.098px;">Info_CarryToShrine15.msbt</div><svg style="position:absolute;left:83.80px;top:1481.24px;" width="20" height="23" viewBox="0 0 20 23"><path d="M0.8 9.4 V0.8 L4.6 5.9 L8.4 0.8 V9.4 M17.8 1.9 Q16.9 0.7 15.3 0.7 Q12.8 0.7 12.8 2.8 Q12.8 4.4 15.3 4.9 Q18.1 5.4 18.1 7.2 Q18.1 9.1 15.3 9.1 Q13.2 9.1 12.5 7.7 M1 21.3 V12.7 H4 Q6.4 12.7 6.4 14.8 Q6.4 16.9 4 16.9 H1 M4 16.9 Q7 16.9 7 19.1 Q7 21.3 4 21.3 H1 M9.6 12.9 H17.8 M13.7 12.9 V21.8" stroke="#5aa5e6" stroke-width="1.65" fill="none" stroke-linejoin="round"/></svg><div class="t" style="left:113.20px;top:1482.81px;font-size:20.00px;line-height:20.00px;color:#cccccc;font-weight:400;letter-spacing:-0.098px;">Info_CarryToShrine16.msbt</div><svg style="position:absolute;left:83.80px;top:1513.88px;" width="20" height="23" viewBox="0 0 20 23"><path d="M0.8 9.4 V0.8 L4.6 5.9 L8.4 0.8 V9.4 M17.8 1.9 Q16.9 0.7 15.3 0.7 Q12.8 0.7 12.8 2.8 Q12.8 4.4 15.3 4.9 Q18.1 5.4 18.1 7.2 Q18.1 9.1 15.3 9.1 Q13.2 9.1 12.5 7.7 M1 21.3 V12.7 H4 Q6.4 12.7 6.4 14.8 Q6.4 16.9 4 16.9 H1 M4 16.9 Q7 16.9 7 19.1 Q7 21.3 4 21.3 H1 M9.6 12.9 H17.8 M13.7 12.9 V21.8" stroke="#5aa5e6" stroke-width="1.65" fill="none" stroke-linejoin="round"/></svg><div class="t" style="left:113.20px;top:1515.45px;font-size:20.00px;line-height:20.00px;color:#cccccc;font-weight:400;letter-spacing:-0.098px;">Info_CarryToShrine17.msbt</div><svg style="position:absolute;left:83.80px;top:1546.52px;" width="20" height="23" viewBox="0 0 20 23"><path d="M0.8 9.4 V0.8 L4.6 5.9 L8.4 0.8 V9.4 M17.8 1.9 Q16.9 0.7 15.3 0.7 Q12.8 0.7 12.8 2.8 Q12.8 4.4 15.3 4.9 Q18.1 5.4 18.1 7.2 Q18.1 9.1 15.3 9.1 Q13.2 9.1 12.5 7.7 M1 21.3 V12.7 H4 Q6.4 12.7 6.4 14.8 Q6.4 16.9 4 16.9 H1 M4 16.9 Q7 16.9 7 19.1 Q7 21.3 4 21.3 H1 M9.6 12.9 H17.8 M13.7 12.9 V21.8" stroke="#5aa5e6" stroke-width="1.65" fill="none" stroke-linejoin="round"/></svg><div class="t" style="left:113.20px;top:1548.09px;font-size:20.00px;line-height:20.00px;color:#cccccc;font-weight:400;letter-spacing:-0.098px;">Info_CarryToShrine19.msbt</div><svg style="position:absolute;left:83.80px;top:1579.16px;" width="20" height="23" viewBox="0 0 20 23"><path d="M0.8 9.4 V0.8 L4.6 5.9 L8.4 0.8 V9.4 M17.8 1.9 Q16.9 0.7 15.3 0.7 Q12.8 0.7 12.8 2.8 Q12.8 4.4 15.3 4.9 Q18.1 5.4 18.1 7.2 Q18.1 9.1 15.3 9.1 Q13.2 9.1 12.5 7.7 M1 21.3 V12.7 H4 Q6.4 12.7 6.4 14.8 Q6.4 16.9 4 16.9 H1 M4 16.9 Q7 16.9 7 19.1 Q7 21.3 4 21.3 H1 M9.6 12.9 H17.8 M13.7 12.9 V21.8" stroke="#5aa5e6" stroke-width="1.65" fill="none" stroke-linejoin="round"/></svg><div class="t" style="left:113.20px;top:1580.73px;font-size:20.00px;line-height:20.00px;color:#cccccc;font-weight:400;letter-spacing:-0.098px;">Info_CarryToShrine20.msbt</div><svg style="position:absolute;left:83.80px;top:1611.80px;" width="20" height="23" viewBox="0 0 20 23"><path d="M0.8 9.4 V0.8 L4.6 5.9 L8.4 0.8 V9.4 M17.8 1.9 Q16.9 0.7 15.3 0.7 Q12.8 0.7 12.8 2.8 Q12.8 4.4 15.3 4.9 Q18.1 5.4 18.1 7.2 Q18.1 9.1 15.3 9.1 Q13.2 9.1 12.5 7.7 M1 21.3 V12.7 H4 Q6.4 12.7 6.4 14.8 Q6.4 16.9 4 16.9 H1 M4 16.9 Q7 16.9 7 19.1 Q7 21.3 4 21.3 H1 M9.6 12.9 H17.8 M13.7 12.9 V21.8" stroke="#5aa5e6" stroke-width="1.65" fill="none" stroke-linejoin="round"/></svg><div class="t" style="left:113.20px;top:1613.37px;font-size:20.00px;line-height:20.00px;color:#cccccc;font-weight:400;letter-spacing:-0.098px;">Info_CarryToShrine21.msbt</div><div style="position:absolute;left:1.00px;top:91.00px;width:513.00px;height:33.00px;background:#252526;"></div><div style="position:absolute;left:1.00px;top:123.00px;width:489.00px;height:2.00px;background:rgba(10,10,10,0.55);"></div><div style="position:absolute;left:1.00px;top:125.00px;width:489.00px;height:3.00px;background:linear-gradient(rgba(0,0,0,0.3), rgba(0,0,0,0));"></div><div class="t" style="left:10.90px;top:100.21px;font-size:17.00px;line-height:17.00px;color:#d0d0d0;font-weight:700;letter-spacing:-0.556px;">LOADED FILES</div><svg style="position:absolute;left:494.00px;top:132.00px;" width="14" height="8" viewBox="0 0 14 8"><path d="M0 8 L7 0 L14 8 Z" fill="#4a4a4a"/></svg><svg style="position:absolute;left:494.00px;top:1608.00px;" width="14" height="8" viewBox="0 0 14 8"><path d="M0 0 L7 8 L14 0 Z" fill="#4a4a4a"/></svg><div style="position:absolute;left:495.00px;top:301.00px;width:13.00px;height:730.00px;background:#3e3e3e;border-radius:6.5px;"></div><div style="position:absolute;left:188px;top:408px;width:342px;height:644px;background:#252526;border:1px solid #454545;border-radius:8px;box-sizing:border-box;box-shadow:0 4px 12px rgba(0,0,0,0.5);"></div><div style="position:absolute;left:195.00px;top:620.30px;width:328.00px;height:38.70px;background:#0f64a6;border-radius:5px;"></div><svg style="position:absolute;left:204.2px;top:425.40px" width="17.3" height="17.3" viewBox="0 0 16 16"><path d="M2 1.5 H11.5 L14.5 4.5 V13 Q14.5 14.5 13 14.5 H3 Q1.5 14.5 1.5 13 V3 Q1.5 1.5 3 1.5 Z M4.5 1.5 V5.5 H10.5 V1.5 M4 14.5 V9.5 H12 V14.5" stroke="#5e5e5e" stroke-width="1.6" fill="none" stroke-linejoin="round"/></svg><div class="t" style="left:236.90px;top:425.07px;font-size:20.00px;line-height:20.00px;color:#6e6e6e;font-weight:400;letter-spacing:-0.627px;">Save</div><svg style="position:absolute;left:204.2px;top:463.90px" width="17.3" height="17.3" viewBox="0 0 16 16"><path d="M5.5 2 L2 5.5 L5.5 9 M2 5.5 H10 Q14 5.5 14 9.5 Q14 13.5 10 13.5 H7" stroke="#5e5e5e" stroke-width="1.6" fill="none" stroke-linejoin="round" stroke-linecap="round"/></svg><div class="t" style="left:236.90px;top:463.57px;font-size:20.00px;line-height:20.00px;color:#6e6e6e;font-weight:400;letter-spacing:-0.568px;">Revert Changes</div><svg style="position:absolute;left:204.2px;top:502.40px" width="17.3" height="17.3" viewBox="0 0 16 16"><path d="M7 2 H3.5 Q1.5 2 1.5 4 V12.5 Q1.5 14.5 3.5 14.5 H12 Q14 14.5 14 12.5 V9 M9.5 1.5 H14.5 V6.5 M14.5 1.5 L7.5 8.5" stroke="#c8c8c8" stroke-width="1.6" fill="none" stroke-linejoin="round" stroke-linecap="round"/></svg><div class="t" style="left:236.90px;top:502.07px;font-size:20.00px;line-height:20.00px;color:#d0d0d0;font-weight:400;letter-spacing:-0.550px;">Open Location</div><div style="position:absolute;left:189.00px;top:535.00px;width:340.00px;height:1.00px;background:#1d1d1d;"></div><div style="position:absolute;left:189.00px;top:536.00px;width:340.00px;height:1.00px;background:#424242;"></div><div style="position:absolute;left:189.00px;top:537.00px;width:340.00px;height:1.00px;background:#333333;"></div><div style="position:absolute;left:189.00px;top:538.00px;width:340.00px;height:1.00px;background:#1d1d1d;"></div><svg style="position:absolute;left:204.00px;top:553.10px;" width="17" height="19" viewBox="0 0 17 19"><path d="M1.9 5.2 V3.9 Q1.9 1.7 4.1 1.7 H10 L14.8 6.5 V15.7 Q14.8 17.9 12.6 17.9 H4.1 Q1.9 17.9 1.9 15.9 M10 1.7 V4.5 Q10 6.5 12 6.5 H14.8 M9.2 11.8 H1.3 M4.2 8.9 L1.3 11.8 L4.2 14.7" stroke="#c8c8c8" stroke-width="1.6" fill="none" stroke-linejoin="round" stroke-linecap="round"/></svg><div class="t" style="left:236.90px;top:553.47px;font-size:20.00px;line-height:20.00px;color:#d0d0d0;font-weight:400;letter-spacing:-0.530px;">Export</div><div class="t" style="left:236.90px;top:591.97px;font-size:20.00px;line-height:20.00px;color:#d0d0d0;font-weight:400;letter-spacing:-0.573px;">Export Uncompressed</div><div class="t" style="left:236.90px;top:630.47px;font-size:20.00px;line-height:20.00px;color:#ffffff;font-weight:400;letter-spacing:-0.524px;">Export Content</div><div class="t" style="left:236.90px;top:668.97px;font-size:20.00px;line-height:20.00px;color:#d0d0d0;font-weight:400;letter-spacing:-0.557px;">Export Uncompressed Content</div><div class="t" style="left:236.90px;top:707.47px;font-size:20.00px;line-height:20.00px;color:#d0d0d0;font-weight:400;letter-spacing:-0.511px;">Export Content as Text</div><div style="position:absolute;left:189.00px;top:742.00px;width:340.00px;height:1.00px;background:#1d1d1d;"></div><div style="position:absolute;left:189.00px;top:743.00px;width:340.00px;height:1.00px;background:#424242;"></div><div style="position:absolute;left:189.00px;top:744.00px;width:340.00px;height:1.00px;background:#333333;"></div><div style="position:absolute;left:189.00px;top:745.00px;width:340.00px;height:1.00px;background:#1d1d1d;"></div><svg style="position:absolute;left:204.00px;top:758.90px;" width="17" height="19" viewBox="0 0 17 19"><path d="M1.9 5.8 V3.9 Q1.9 1.7 4.1 1.7 H10 L14.8 6.5 V15.7 Q14.8 17.9 12.6 17.9 H2.2 M10 1.7 V4.5 Q10 6.5 12 6.5 H14.8 M0.9 12.3 H9 M6.3 9.6 L9 12.3 L6.3 15" stroke="#c8c8c8" stroke-width="1.6" fill="none" stroke-linejoin="round" stroke-linecap="round"/></svg><div class="t" style="left:236.90px;top:759.27px;font-size:20.00px;line-height:20.00px;color:#d0d0d0;font-weight:400;letter-spacing:-0.520px;">Import</div><div class="t" style="left:236.90px;top:797.77px;font-size:20.00px;line-height:20.00px;color:#d0d0d0;font-weight:400;letter-spacing:-0.570px;">Import Uncompressed</div><div class="t" style="left:236.90px;top:836.27px;font-size:20.00px;line-height:20.00px;color:#d0d0d0;font-weight:400;letter-spacing:-0.520px;">Import Content</div><div class="t" style="left:236.90px;top:874.77px;font-size:20.00px;line-height:20.00px;color:#d0d0d0;font-weight:400;letter-spacing:-0.555px;">Import Uncompressed Content</div><div class="t" style="left:236.90px;top:913.27px;font-size:20.00px;line-height:20.00px;color:#d0d0d0;font-weight:400;letter-spacing:-0.509px;">Import Content as Text</div><div style="position:absolute;left:189.00px;top:947.00px;width:340.00px;height:1.00px;background:#1d1d1d;"></div><div style="position:absolute;left:189.00px;top:948.00px;width:340.00px;height:1.00px;background:#424242;"></div><div style="position:absolute;left:189.00px;top:949.00px;width:340.00px;height:1.00px;background:#333333;"></div><div style="position:absolute;left:189.00px;top:950.00px;width:340.00px;height:1.00px;background:#1d1d1d;"></div><svg style="position:absolute;left:204.2px;top:964.90px" width="17.3" height="17.3" viewBox="0 0 16 16"><path d="M2 15 L2.8 11.5 L11.5 2.8 Q12.8 1.5 14.1 2.8 Q15.4 4.1 14.1 5.4 L5.4 14.1 Z M10.3 4 L13 6.7" stroke="#c8c8c8" stroke-width="1.6" fill="none" stroke-linejoin="round"/></svg><div class="t" style="left:236.90px;top:964.57px;font-size:20.00px;line-height:20.00px;color:#d0d0d0;font-weight:400;letter-spacing:-0.693px;">Rename</div><div style="position:absolute;left:189.00px;top:999.00px;width:340.00px;height:1.00px;background:#1d1d1d;"></div><div style="position:absolute;left:189.00px;top:1000.00px;width:340.00px;height:1.00px;background:#424242;"></div><div style="position:absolute;left:189.00px;top:1001.00px;width:340.00px;height:1.00px;background:#333333;"></div><div style="position:absolute;left:189.00px;top:1002.00px;width:340.00px;height:1.00px;background:#1d1d1d;"></div><svg style="position:absolute;left:204.2px;top:1016.30px" width="17.3" height="17.3" viewBox="0 0 16 16"><path d="M3 3 L13 13 M13 3 L3 13" stroke="#c8c8c8" stroke-width="1.6" fill="none"/></svg><div class="t" style="left:236.90px;top:1015.97px;font-size:20.00px;line-height:20.00px;color:#d0d0d0;font-weight:400;letter-spacing:-0.581px;">Unload</div><div style="position:absolute;left:1.00px;top:1623.00px;width:2558.00px;height:1.00px;background:#1a1414;"></div><div style="position:absolute;left:1.00px;top:1624.00px;width:2558.00px;height:35.00px;background:#007acc;"></div><div class="t" style="left:20.90px;top:1634.36px;font-size:18.00px;line-height:18.00px;color:#ffffff;font-weight:400;letter-spacing:-0.139px;">Loaded folder content in 0.15s</div><div style="position:absolute;left:2215.00px;top:1641.00px;width:12.50px;height:1.50px;background:#ffffff;"></div><div class="t" style="left:2246.60px;top:1634.16px;font-size:18.00px;line-height:18.00px;color:#ffffff;font-weight:400;letter-spacing:-1.159px;">100%</div><svg style="position:absolute;left:2306.00px;top:1635.00px;" width="13" height="14" viewBox="0 0 13 14"><path d="M6.5 0.5 V13.5 M0 7 H13" stroke="#ffffff" stroke-width="1.5" fill="none"/></svg><svg style="position:absolute;left:2345.00px;top:1634.00px;" width="17" height="17" viewBox="0 0 17 17"><path d="M2.8 5.2 V2.8 Q2.8 1 4.6 1 H10.2 L15 5.8 V14.2 Q15 16 13.2 16 H2.8" stroke="#ffffff" stroke-width="1.5" fill="none" stroke-linejoin="round"/><path d="M10.2 1 V4.4 Q10.2 5.8 11.6 5.8 H15" stroke="#ffffff" stroke-width="1.3" fill="none"/><text x="0.9" y="13.4" font-family="Liberation Mono" font-weight="700" font-size="8.6" fill="#ffffff">01</text></svg><div class="t" style="left:2369.20px;top:1634.16px;font-size:18.00px;line-height:18.00px;color:#ffffff;font-weight:400;letter-spacing:-0.096px;">Dict loaded</div><svg style="position:absolute;left:2483.50px;top:1634.00px;" width="17" height="17" viewBox="0 0 17 17"><rect x="1.35" y="1.85" width="13.6" height="13.1" rx="1.6" stroke="#ffffff" stroke-width="1.5" fill="none"/><path d="M12.2 4.3 Q11.5 3.6 10.4 3.7 Q9.1 3.9 8.8 5.5 L7.7 11 Q7.3 12.7 5.3 12.3 M6.9 7.8 H11.2" stroke="#ffffff" stroke-width="1.5" fill="none" stroke-linecap="round"/></svg><div class="t" style="left:2506.20px;top:1634.16px;font-size:18.00px;line-height:18.00px;color:#ffffff;font-weight:400;letter-spacing:-0.878px;">TotK</div></body></html>
